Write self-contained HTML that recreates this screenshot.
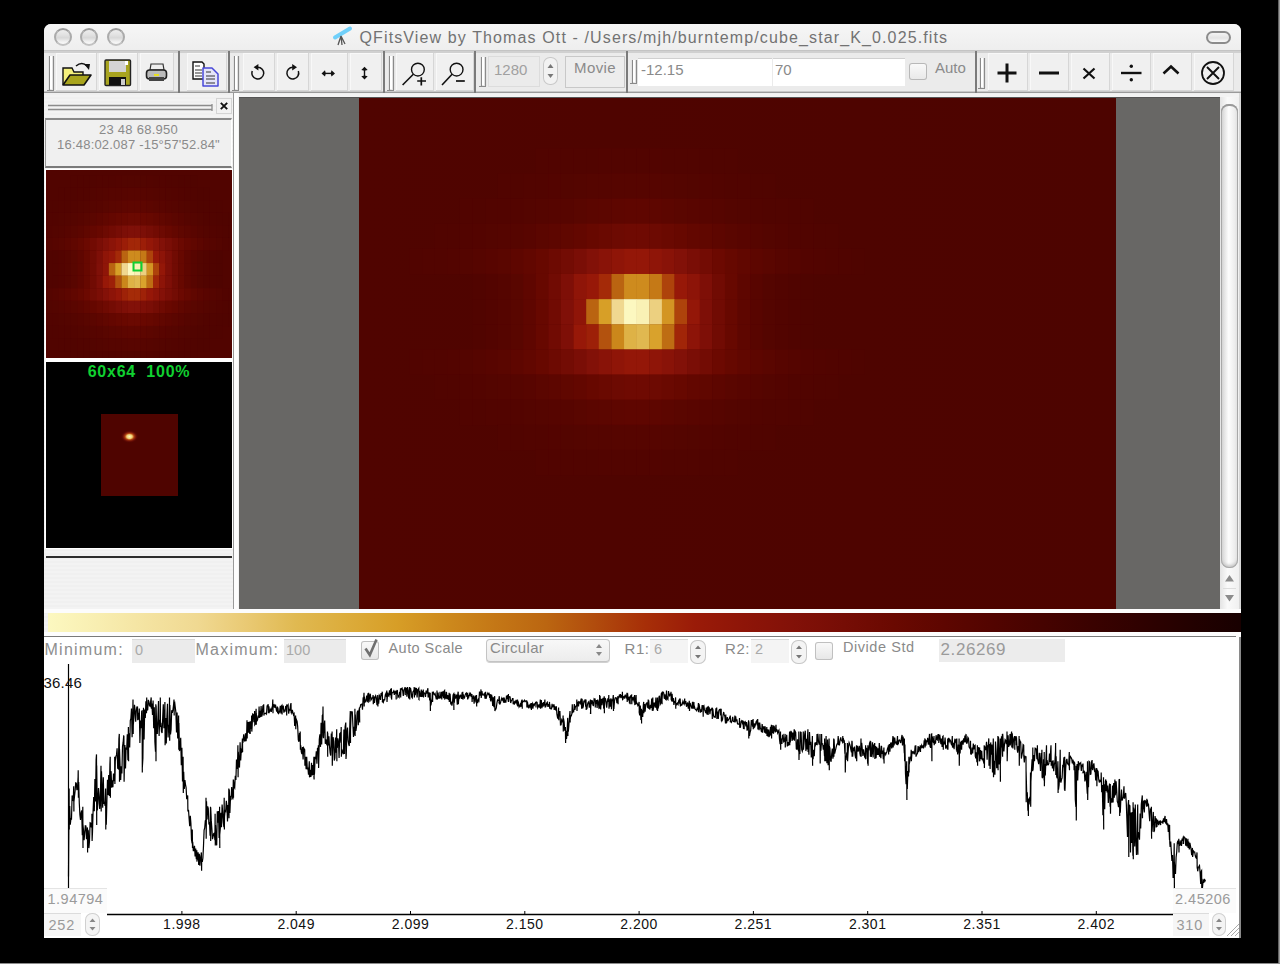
<!DOCTYPE html><html><head><meta charset="utf-8"><style>
*{margin:0;padding:0;box-sizing:border-box}
html,body{width:1280px;height:965px;background:#000;overflow:hidden;font-family:"Liberation Sans",sans-serif}
.a{position:absolute}
.t{white-space:nowrap;line-height:1}
svg{position:absolute;overflow:visible}
.btn{background:#f0f0f0;border-right:1px solid #d4d4d4;border-bottom:1px solid #d8d8d8;border-left:1px solid #f8f8f8}
.sep{background:#6a6a6a}
</style></head><body>
<svg width="0" height="0" style="position:absolute"><defs><g id="star"><rect x="176.68" y="50.28" width="12.92" height="25.44" fill="#510400"/><rect x="189.30" y="50.28" width="12.92" height="25.44" fill="#510400"/><rect x="201.92" y="50.28" width="12.92" height="25.44" fill="#510400"/><rect x="214.54" y="50.28" width="12.92" height="25.44" fill="#510400"/><rect x="227.16" y="50.28" width="12.92" height="25.44" fill="#510400"/><rect x="239.78" y="50.28" width="12.92" height="25.44" fill="#520400"/><rect x="252.40" y="50.28" width="12.92" height="25.44" fill="#520400"/><rect x="265.02" y="50.28" width="12.92" height="25.44" fill="#520400"/><rect x="277.64" y="50.28" width="12.92" height="25.44" fill="#520400"/><rect x="290.26" y="50.28" width="12.92" height="25.44" fill="#520400"/><rect x="302.88" y="50.28" width="12.92" height="25.44" fill="#510400"/><rect x="315.50" y="50.28" width="12.92" height="25.44" fill="#510400"/><rect x="328.12" y="50.28" width="12.92" height="25.44" fill="#510400"/><rect x="340.74" y="50.28" width="12.92" height="25.44" fill="#500400"/><rect x="353.36" y="50.28" width="12.92" height="25.44" fill="#500400"/><rect x="365.98" y="50.28" width="12.92" height="25.44" fill="#500400"/><rect x="138.82" y="75.42" width="12.92" height="25.44" fill="#510400"/><rect x="151.44" y="75.42" width="12.92" height="25.44" fill="#510400"/><rect x="164.06" y="75.42" width="12.92" height="25.44" fill="#520400"/><rect x="176.68" y="75.42" width="12.92" height="25.44" fill="#520400"/><rect x="189.30" y="75.42" width="12.92" height="25.44" fill="#530400"/><rect x="201.92" y="75.42" width="12.92" height="25.44" fill="#530500"/><rect x="214.54" y="75.42" width="12.92" height="25.44" fill="#540500"/><rect x="227.16" y="75.42" width="12.92" height="25.44" fill="#550500"/><rect x="239.78" y="75.42" width="12.92" height="25.44" fill="#550500"/><rect x="252.40" y="75.42" width="12.92" height="25.44" fill="#560500"/><rect x="265.02" y="75.42" width="12.92" height="25.44" fill="#560500"/><rect x="277.64" y="75.42" width="12.92" height="25.44" fill="#560500"/><rect x="290.26" y="75.42" width="12.92" height="25.44" fill="#560500"/><rect x="302.88" y="75.42" width="12.92" height="25.44" fill="#550500"/><rect x="315.50" y="75.42" width="12.92" height="25.44" fill="#540500"/><rect x="328.12" y="75.42" width="12.92" height="25.44" fill="#530500"/><rect x="340.74" y="75.42" width="12.92" height="25.44" fill="#530400"/><rect x="353.36" y="75.42" width="12.92" height="25.44" fill="#520400"/><rect x="365.98" y="75.42" width="12.92" height="25.44" fill="#510400"/><rect x="378.60" y="75.42" width="12.92" height="25.44" fill="#510400"/><rect x="391.22" y="75.42" width="12.92" height="25.44" fill="#500400"/><rect x="403.84" y="75.42" width="12.92" height="25.44" fill="#500400"/><rect x="100.96" y="100.56" width="12.92" height="25.44" fill="#510400"/><rect x="113.58" y="100.56" width="12.92" height="25.44" fill="#510400"/><rect x="126.20" y="100.56" width="12.92" height="25.44" fill="#520400"/><rect x="138.82" y="100.56" width="12.92" height="25.44" fill="#520400"/><rect x="151.44" y="100.56" width="12.92" height="25.44" fill="#530400"/><rect x="164.06" y="100.56" width="12.92" height="25.44" fill="#540500"/><rect x="176.68" y="100.56" width="12.92" height="25.44" fill="#550500"/><rect x="189.30" y="100.56" width="12.92" height="25.44" fill="#560500"/><rect x="201.92" y="100.56" width="12.92" height="25.44" fill="#570500"/><rect x="214.54" y="100.56" width="12.92" height="25.44" fill="#590600"/><rect x="227.16" y="100.56" width="12.92" height="25.44" fill="#5b0600"/><rect x="239.78" y="100.56" width="12.92" height="25.44" fill="#5c0600"/><rect x="252.40" y="100.56" width="12.92" height="25.44" fill="#5e0600"/><rect x="265.02" y="100.56" width="12.92" height="25.44" fill="#5f0600"/><rect x="277.64" y="100.56" width="12.92" height="25.44" fill="#5f0600"/><rect x="290.26" y="100.56" width="12.92" height="25.44" fill="#5e0600"/><rect x="302.88" y="100.56" width="12.92" height="25.44" fill="#5c0600"/><rect x="315.50" y="100.56" width="12.92" height="25.44" fill="#5a0600"/><rect x="328.12" y="100.56" width="12.92" height="25.44" fill="#590500"/><rect x="340.74" y="100.56" width="12.92" height="25.44" fill="#570500"/><rect x="353.36" y="100.56" width="12.92" height="25.44" fill="#560500"/><rect x="365.98" y="100.56" width="12.92" height="25.44" fill="#540500"/><rect x="378.60" y="100.56" width="12.92" height="25.44" fill="#530500"/><rect x="391.22" y="100.56" width="12.92" height="25.44" fill="#520400"/><rect x="403.84" y="100.56" width="12.92" height="25.44" fill="#510400"/><rect x="416.46" y="100.56" width="12.92" height="25.44" fill="#510400"/><rect x="429.08" y="100.56" width="12.92" height="25.44" fill="#500400"/><rect x="441.70" y="100.56" width="12.92" height="25.44" fill="#500400"/><rect x="75.72" y="125.70" width="12.92" height="25.44" fill="#510400"/><rect x="88.34" y="125.70" width="12.92" height="25.44" fill="#510400"/><rect x="100.96" y="125.70" width="12.92" height="25.44" fill="#520400"/><rect x="113.58" y="125.70" width="12.92" height="25.44" fill="#530400"/><rect x="126.20" y="125.70" width="12.92" height="25.44" fill="#540500"/><rect x="138.82" y="125.70" width="12.92" height="25.44" fill="#550500"/><rect x="151.44" y="125.70" width="12.92" height="25.44" fill="#560500"/><rect x="164.06" y="125.70" width="12.92" height="25.44" fill="#580500"/><rect x="176.68" y="125.70" width="12.92" height="25.44" fill="#5b0600"/><rect x="189.30" y="125.70" width="12.92" height="25.44" fill="#5d0600"/><rect x="201.92" y="125.70" width="12.92" height="25.44" fill="#600700"/><rect x="214.54" y="125.70" width="12.92" height="25.44" fill="#630700"/><rect x="227.16" y="125.70" width="12.92" height="25.44" fill="#670800"/><rect x="239.78" y="125.70" width="12.92" height="25.44" fill="#6a0901"/><rect x="252.40" y="125.70" width="12.92" height="25.44" fill="#6d0a02"/><rect x="265.02" y="125.70" width="12.92" height="25.44" fill="#6f0a02"/><rect x="277.64" y="125.70" width="12.92" height="25.44" fill="#6f0a02"/><rect x="290.26" y="125.70" width="12.92" height="25.44" fill="#6d0a02"/><rect x="302.88" y="125.70" width="12.92" height="25.44" fill="#6a0901"/><rect x="315.50" y="125.70" width="12.92" height="25.44" fill="#670800"/><rect x="328.12" y="125.70" width="12.92" height="25.44" fill="#630700"/><rect x="340.74" y="125.70" width="12.92" height="25.44" fill="#600700"/><rect x="353.36" y="125.70" width="12.92" height="25.44" fill="#5d0600"/><rect x="365.98" y="125.70" width="12.92" height="25.44" fill="#5a0600"/><rect x="378.60" y="125.70" width="12.92" height="25.44" fill="#580500"/><rect x="391.22" y="125.70" width="12.92" height="25.44" fill="#560500"/><rect x="403.84" y="125.70" width="12.92" height="25.44" fill="#540500"/><rect x="416.46" y="125.70" width="12.92" height="25.44" fill="#530400"/><rect x="429.08" y="125.70" width="12.92" height="25.44" fill="#510400"/><rect x="441.70" y="125.70" width="12.92" height="25.44" fill="#510400"/><rect x="454.32" y="125.70" width="12.92" height="25.44" fill="#500400"/><rect x="466.94" y="125.70" width="12.92" height="25.44" fill="#500400"/><rect x="50.48" y="150.84" width="12.92" height="25.44" fill="#510400"/><rect x="63.10" y="150.84" width="12.92" height="25.44" fill="#520400"/><rect x="75.72" y="150.84" width="12.92" height="25.44" fill="#520400"/><rect x="88.34" y="150.84" width="12.92" height="25.44" fill="#530400"/><rect x="100.96" y="150.84" width="12.92" height="25.44" fill="#540500"/><rect x="113.58" y="150.84" width="12.92" height="25.44" fill="#560500"/><rect x="126.20" y="150.84" width="12.92" height="25.44" fill="#580500"/><rect x="138.82" y="150.84" width="12.92" height="25.44" fill="#5a0600"/><rect x="151.44" y="150.84" width="12.92" height="25.44" fill="#5e0600"/><rect x="164.06" y="150.84" width="12.92" height="25.44" fill="#620700"/><rect x="176.68" y="150.84" width="12.92" height="25.44" fill="#670800"/><rect x="189.30" y="150.84" width="12.92" height="25.44" fill="#6d0a02"/><rect x="201.92" y="150.84" width="12.92" height="25.44" fill="#730c04"/><rect x="214.54" y="150.84" width="12.92" height="25.44" fill="#7a0e06"/><rect x="227.16" y="150.84" width="12.92" height="25.44" fill="#821108"/><rect x="239.78" y="150.84" width="12.92" height="25.44" fill="#891308"/><rect x="252.40" y="150.84" width="12.92" height="25.44" fill="#8f1508"/><rect x="265.02" y="150.84" width="12.92" height="25.44" fill="#941708"/><rect x="277.64" y="150.84" width="12.92" height="25.44" fill="#941708"/><rect x="290.26" y="150.84" width="12.92" height="25.44" fill="#8f1508"/><rect x="302.88" y="150.84" width="12.92" height="25.44" fill="#891308"/><rect x="315.50" y="150.84" width="12.92" height="25.44" fill="#821108"/><rect x="328.12" y="150.84" width="12.92" height="25.44" fill="#7a0e06"/><rect x="340.74" y="150.84" width="12.92" height="25.44" fill="#730c04"/><rect x="353.36" y="150.84" width="12.92" height="25.44" fill="#6c0901"/><rect x="365.98" y="150.84" width="12.92" height="25.44" fill="#660800"/><rect x="378.60" y="150.84" width="12.92" height="25.44" fill="#610700"/><rect x="391.22" y="150.84" width="12.92" height="25.44" fill="#5d0600"/><rect x="403.84" y="150.84" width="12.92" height="25.44" fill="#5a0600"/><rect x="416.46" y="150.84" width="12.92" height="25.44" fill="#570500"/><rect x="429.08" y="150.84" width="12.92" height="25.44" fill="#550500"/><rect x="441.70" y="150.84" width="12.92" height="25.44" fill="#530400"/><rect x="454.32" y="150.84" width="12.92" height="25.44" fill="#520400"/><rect x="466.94" y="150.84" width="12.92" height="25.44" fill="#510400"/><rect x="479.56" y="150.84" width="12.92" height="25.44" fill="#500400"/><rect x="492.18" y="150.84" width="12.92" height="25.44" fill="#4f0400"/><rect x="113.58" y="175.98" width="12.92" height="25.44" fill="#510400"/><rect x="126.20" y="175.98" width="12.92" height="25.44" fill="#530400"/><rect x="138.82" y="175.98" width="12.92" height="25.44" fill="#550500"/><rect x="151.44" y="175.98" width="12.92" height="25.44" fill="#590600"/><rect x="164.06" y="175.98" width="12.92" height="25.44" fill="#5f0600"/><rect x="176.68" y="175.98" width="12.92" height="25.44" fill="#670800"/><rect x="189.30" y="175.98" width="12.92" height="25.44" fill="#710b03"/><rect x="201.92" y="175.98" width="12.92" height="25.44" fill="#7e0f07"/><rect x="214.54" y="175.98" width="12.92" height="25.44" fill="#8f1508"/><rect x="227.16" y="175.98" width="12.92" height="25.44" fill="#971808"/><rect x="239.78" y="175.98" width="12.92" height="25.44" fill="#a42a08"/><rect x="252.40" y="175.98" width="12.92" height="25.44" fill="#ba6411"/><rect x="265.02" y="175.98" width="12.92" height="25.44" fill="#ce8b1e"/><rect x="277.64" y="175.98" width="12.92" height="25.44" fill="#ce8b1e"/><rect x="290.26" y="175.98" width="12.92" height="25.44" fill="#c57916"/><rect x="302.88" y="175.98" width="12.92" height="25.44" fill="#ae430b"/><rect x="315.50" y="175.98" width="12.92" height="25.44" fill="#971808"/><rect x="328.12" y="175.98" width="12.92" height="25.44" fill="#8d1408"/><rect x="340.74" y="175.98" width="12.92" height="25.44" fill="#7e0f07"/><rect x="353.36" y="175.98" width="12.92" height="25.44" fill="#710b03"/><rect x="365.98" y="175.98" width="12.92" height="25.44" fill="#670800"/><rect x="378.60" y="175.98" width="12.92" height="25.44" fill="#5e0600"/><rect x="391.22" y="175.98" width="12.92" height="25.44" fill="#580500"/><rect x="403.84" y="175.98" width="12.92" height="25.44" fill="#540500"/><rect x="416.46" y="175.98" width="12.92" height="25.44" fill="#520400"/><rect x="429.08" y="175.98" width="12.92" height="25.44" fill="#500400"/><rect x="441.70" y="175.98" width="12.92" height="25.44" fill="#4f0400"/><rect x="113.58" y="201.12" width="12.92" height="25.44" fill="#510400"/><rect x="126.20" y="201.12" width="12.92" height="25.44" fill="#530400"/><rect x="138.82" y="201.12" width="12.92" height="25.44" fill="#550500"/><rect x="151.44" y="201.12" width="12.92" height="25.44" fill="#590600"/><rect x="164.06" y="201.12" width="12.92" height="25.44" fill="#5f0600"/><rect x="176.68" y="201.12" width="12.92" height="25.44" fill="#670800"/><rect x="189.30" y="201.12" width="12.92" height="25.44" fill="#710b03"/><rect x="201.92" y="201.12" width="12.92" height="25.44" fill="#801008"/><rect x="214.54" y="201.12" width="12.92" height="25.44" fill="#8f1508"/><rect x="227.16" y="201.12" width="12.92" height="25.44" fill="#ba6411"/><rect x="239.78" y="201.12" width="12.92" height="25.44" fill="#d79f27"/><rect x="252.40" y="201.12" width="12.92" height="25.44" fill="#f0d890"/><rect x="265.02" y="201.12" width="12.92" height="25.44" fill="#fcf8c0"/><rect x="277.64" y="201.12" width="12.92" height="25.44" fill="#f9f1b5"/><rect x="290.26" y="201.12" width="12.92" height="25.44" fill="#ecd080"/><rect x="302.88" y="201.12" width="12.92" height="25.44" fill="#d39523"/><rect x="315.50" y="201.12" width="12.92" height="25.44" fill="#ae430b"/><rect x="328.12" y="201.12" width="12.92" height="25.44" fill="#941708"/><rect x="340.74" y="201.12" width="12.92" height="25.44" fill="#7e0f07"/><rect x="353.36" y="201.12" width="12.92" height="25.44" fill="#710b03"/><rect x="365.98" y="201.12" width="12.92" height="25.44" fill="#670800"/><rect x="378.60" y="201.12" width="12.92" height="25.44" fill="#5e0600"/><rect x="391.22" y="201.12" width="12.92" height="25.44" fill="#580500"/><rect x="403.84" y="201.12" width="12.92" height="25.44" fill="#540500"/><rect x="416.46" y="201.12" width="12.92" height="25.44" fill="#520400"/><rect x="429.08" y="201.12" width="12.92" height="25.44" fill="#500400"/><rect x="441.70" y="201.12" width="12.92" height="25.44" fill="#4f0400"/><rect x="113.58" y="226.26" width="12.92" height="25.44" fill="#510400"/><rect x="126.20" y="226.26" width="12.92" height="25.44" fill="#530400"/><rect x="138.82" y="226.26" width="12.92" height="25.44" fill="#550500"/><rect x="151.44" y="226.26" width="12.92" height="25.44" fill="#590600"/><rect x="164.06" y="226.26" width="12.92" height="25.44" fill="#5f0600"/><rect x="176.68" y="226.26" width="12.92" height="25.44" fill="#670800"/><rect x="189.30" y="226.26" width="12.92" height="25.44" fill="#710b03"/><rect x="201.92" y="226.26" width="12.92" height="25.44" fill="#7e0f07"/><rect x="214.54" y="226.26" width="12.92" height="25.44" fill="#971808"/><rect x="227.16" y="226.26" width="12.92" height="25.44" fill="#9d2008"/><rect x="239.78" y="226.26" width="12.92" height="25.44" fill="#b3520e"/><rect x="252.40" y="226.26" width="12.92" height="25.44" fill="#cb871b"/><rect x="265.02" y="226.26" width="12.92" height="25.44" fill="#deb246"/><rect x="277.64" y="226.26" width="12.92" height="25.44" fill="#e0b850"/><rect x="290.26" y="226.26" width="12.92" height="25.44" fill="#d9a22c"/><rect x="302.88" y="226.26" width="12.92" height="25.44" fill="#be6d13"/><rect x="315.50" y="226.26" width="12.92" height="25.44" fill="#a12508"/><rect x="328.12" y="226.26" width="12.92" height="25.44" fill="#8d1408"/><rect x="340.74" y="226.26" width="12.92" height="25.44" fill="#7e0f07"/><rect x="353.36" y="226.26" width="12.92" height="25.44" fill="#710b03"/><rect x="365.98" y="226.26" width="12.92" height="25.44" fill="#670800"/><rect x="378.60" y="226.26" width="12.92" height="25.44" fill="#5e0600"/><rect x="391.22" y="226.26" width="12.92" height="25.44" fill="#580500"/><rect x="403.84" y="226.26" width="12.92" height="25.44" fill="#540500"/><rect x="416.46" y="226.26" width="12.92" height="25.44" fill="#520400"/><rect x="429.08" y="226.26" width="12.92" height="25.44" fill="#500400"/><rect x="441.70" y="226.26" width="12.92" height="25.44" fill="#4f0400"/><rect x="50.48" y="251.40" width="12.92" height="25.44" fill="#510400"/><rect x="63.10" y="251.40" width="12.92" height="25.44" fill="#520400"/><rect x="75.72" y="251.40" width="12.92" height="25.44" fill="#520400"/><rect x="88.34" y="251.40" width="12.92" height="25.44" fill="#530400"/><rect x="100.96" y="251.40" width="12.92" height="25.44" fill="#540500"/><rect x="113.58" y="251.40" width="12.92" height="25.44" fill="#560500"/><rect x="126.20" y="251.40" width="12.92" height="25.44" fill="#580500"/><rect x="138.82" y="251.40" width="12.92" height="25.44" fill="#5a0600"/><rect x="151.44" y="251.40" width="12.92" height="25.44" fill="#5e0600"/><rect x="164.06" y="251.40" width="12.92" height="25.44" fill="#620700"/><rect x="176.68" y="251.40" width="12.92" height="25.44" fill="#670800"/><rect x="189.30" y="251.40" width="12.92" height="25.44" fill="#6d0a02"/><rect x="201.92" y="251.40" width="12.92" height="25.44" fill="#730c04"/><rect x="214.54" y="251.40" width="12.92" height="25.44" fill="#7a0e06"/><rect x="227.16" y="251.40" width="12.92" height="25.44" fill="#821108"/><rect x="239.78" y="251.40" width="12.92" height="25.44" fill="#891308"/><rect x="252.40" y="251.40" width="12.92" height="25.44" fill="#8f1508"/><rect x="265.02" y="251.40" width="12.92" height="25.44" fill="#941708"/><rect x="277.64" y="251.40" width="12.92" height="25.44" fill="#941708"/><rect x="290.26" y="251.40" width="12.92" height="25.44" fill="#8f1508"/><rect x="302.88" y="251.40" width="12.92" height="25.44" fill="#891308"/><rect x="315.50" y="251.40" width="12.92" height="25.44" fill="#821108"/><rect x="328.12" y="251.40" width="12.92" height="25.44" fill="#7a0e06"/><rect x="340.74" y="251.40" width="12.92" height="25.44" fill="#730c04"/><rect x="353.36" y="251.40" width="12.92" height="25.44" fill="#6c0901"/><rect x="365.98" y="251.40" width="12.92" height="25.44" fill="#660800"/><rect x="378.60" y="251.40" width="12.92" height="25.44" fill="#610700"/><rect x="391.22" y="251.40" width="12.92" height="25.44" fill="#5d0600"/><rect x="403.84" y="251.40" width="12.92" height="25.44" fill="#5a0600"/><rect x="416.46" y="251.40" width="12.92" height="25.44" fill="#570500"/><rect x="429.08" y="251.40" width="12.92" height="25.44" fill="#550500"/><rect x="441.70" y="251.40" width="12.92" height="25.44" fill="#530400"/><rect x="454.32" y="251.40" width="12.92" height="25.44" fill="#520400"/><rect x="466.94" y="251.40" width="12.92" height="25.44" fill="#510400"/><rect x="479.56" y="251.40" width="12.92" height="25.44" fill="#500400"/><rect x="492.18" y="251.40" width="12.92" height="25.44" fill="#4f0400"/><rect x="75.72" y="276.54" width="12.92" height="25.44" fill="#510400"/><rect x="88.34" y="276.54" width="12.92" height="25.44" fill="#510400"/><rect x="100.96" y="276.54" width="12.92" height="25.44" fill="#520400"/><rect x="113.58" y="276.54" width="12.92" height="25.44" fill="#530400"/><rect x="126.20" y="276.54" width="12.92" height="25.44" fill="#540500"/><rect x="138.82" y="276.54" width="12.92" height="25.44" fill="#550500"/><rect x="151.44" y="276.54" width="12.92" height="25.44" fill="#560500"/><rect x="164.06" y="276.54" width="12.92" height="25.44" fill="#580500"/><rect x="176.68" y="276.54" width="12.92" height="25.44" fill="#5b0600"/><rect x="189.30" y="276.54" width="12.92" height="25.44" fill="#5d0600"/><rect x="201.92" y="276.54" width="12.92" height="25.44" fill="#600700"/><rect x="214.54" y="276.54" width="12.92" height="25.44" fill="#630700"/><rect x="227.16" y="276.54" width="12.92" height="25.44" fill="#670800"/><rect x="239.78" y="276.54" width="12.92" height="25.44" fill="#6a0901"/><rect x="252.40" y="276.54" width="12.92" height="25.44" fill="#6d0a02"/><rect x="265.02" y="276.54" width="12.92" height="25.44" fill="#6f0a02"/><rect x="277.64" y="276.54" width="12.92" height="25.44" fill="#6f0a02"/><rect x="290.26" y="276.54" width="12.92" height="25.44" fill="#6d0a02"/><rect x="302.88" y="276.54" width="12.92" height="25.44" fill="#6a0901"/><rect x="315.50" y="276.54" width="12.92" height="25.44" fill="#670800"/><rect x="328.12" y="276.54" width="12.92" height="25.44" fill="#630700"/><rect x="340.74" y="276.54" width="12.92" height="25.44" fill="#600700"/><rect x="353.36" y="276.54" width="12.92" height="25.44" fill="#5d0600"/><rect x="365.98" y="276.54" width="12.92" height="25.44" fill="#5a0600"/><rect x="378.60" y="276.54" width="12.92" height="25.44" fill="#580500"/><rect x="391.22" y="276.54" width="12.92" height="25.44" fill="#560500"/><rect x="403.84" y="276.54" width="12.92" height="25.44" fill="#540500"/><rect x="416.46" y="276.54" width="12.92" height="25.44" fill="#530400"/><rect x="429.08" y="276.54" width="12.92" height="25.44" fill="#510400"/><rect x="441.70" y="276.54" width="12.92" height="25.44" fill="#510400"/><rect x="454.32" y="276.54" width="12.92" height="25.44" fill="#500400"/><rect x="466.94" y="276.54" width="12.92" height="25.44" fill="#500400"/><rect x="100.96" y="301.68" width="12.92" height="25.44" fill="#510400"/><rect x="113.58" y="301.68" width="12.92" height="25.44" fill="#510400"/><rect x="126.20" y="301.68" width="12.92" height="25.44" fill="#520400"/><rect x="138.82" y="301.68" width="12.92" height="25.44" fill="#520400"/><rect x="151.44" y="301.68" width="12.92" height="25.44" fill="#530400"/><rect x="164.06" y="301.68" width="12.92" height="25.44" fill="#540500"/><rect x="176.68" y="301.68" width="12.92" height="25.44" fill="#550500"/><rect x="189.30" y="301.68" width="12.92" height="25.44" fill="#560500"/><rect x="201.92" y="301.68" width="12.92" height="25.44" fill="#570500"/><rect x="214.54" y="301.68" width="12.92" height="25.44" fill="#590600"/><rect x="227.16" y="301.68" width="12.92" height="25.44" fill="#5b0600"/><rect x="239.78" y="301.68" width="12.92" height="25.44" fill="#5c0600"/><rect x="252.40" y="301.68" width="12.92" height="25.44" fill="#5e0600"/><rect x="265.02" y="301.68" width="12.92" height="25.44" fill="#5f0600"/><rect x="277.64" y="301.68" width="12.92" height="25.44" fill="#5f0600"/><rect x="290.26" y="301.68" width="12.92" height="25.44" fill="#5e0600"/><rect x="302.88" y="301.68" width="12.92" height="25.44" fill="#5c0600"/><rect x="315.50" y="301.68" width="12.92" height="25.44" fill="#5a0600"/><rect x="328.12" y="301.68" width="12.92" height="25.44" fill="#590500"/><rect x="340.74" y="301.68" width="12.92" height="25.44" fill="#570500"/><rect x="353.36" y="301.68" width="12.92" height="25.44" fill="#560500"/><rect x="365.98" y="301.68" width="12.92" height="25.44" fill="#540500"/><rect x="378.60" y="301.68" width="12.92" height="25.44" fill="#530500"/><rect x="391.22" y="301.68" width="12.92" height="25.44" fill="#520400"/><rect x="403.84" y="301.68" width="12.92" height="25.44" fill="#510400"/><rect x="416.46" y="301.68" width="12.92" height="25.44" fill="#510400"/><rect x="429.08" y="301.68" width="12.92" height="25.44" fill="#500400"/><rect x="441.70" y="301.68" width="12.92" height="25.44" fill="#500400"/><rect x="138.82" y="326.82" width="12.92" height="25.44" fill="#510400"/><rect x="151.44" y="326.82" width="12.92" height="25.44" fill="#510400"/><rect x="164.06" y="326.82" width="12.92" height="25.44" fill="#520400"/><rect x="176.68" y="326.82" width="12.92" height="25.44" fill="#520400"/><rect x="189.30" y="326.82" width="12.92" height="25.44" fill="#530400"/><rect x="201.92" y="326.82" width="12.92" height="25.44" fill="#530500"/><rect x="214.54" y="326.82" width="12.92" height="25.44" fill="#540500"/><rect x="227.16" y="326.82" width="12.92" height="25.44" fill="#550500"/><rect x="239.78" y="326.82" width="12.92" height="25.44" fill="#550500"/><rect x="252.40" y="326.82" width="12.92" height="25.44" fill="#560500"/><rect x="265.02" y="326.82" width="12.92" height="25.44" fill="#560500"/><rect x="277.64" y="326.82" width="12.92" height="25.44" fill="#560500"/><rect x="290.26" y="326.82" width="12.92" height="25.44" fill="#560500"/><rect x="302.88" y="326.82" width="12.92" height="25.44" fill="#550500"/><rect x="315.50" y="326.82" width="12.92" height="25.44" fill="#540500"/><rect x="328.12" y="326.82" width="12.92" height="25.44" fill="#530500"/><rect x="340.74" y="326.82" width="12.92" height="25.44" fill="#530400"/><rect x="353.36" y="326.82" width="12.92" height="25.44" fill="#520400"/><rect x="365.98" y="326.82" width="12.92" height="25.44" fill="#510400"/><rect x="378.60" y="326.82" width="12.92" height="25.44" fill="#510400"/><rect x="391.22" y="326.82" width="12.92" height="25.44" fill="#500400"/><rect x="403.84" y="326.82" width="12.92" height="25.44" fill="#500400"/><rect x="176.68" y="351.96" width="12.92" height="25.44" fill="#510400"/><rect x="189.30" y="351.96" width="12.92" height="25.44" fill="#510400"/><rect x="201.92" y="351.96" width="12.92" height="25.44" fill="#510400"/><rect x="214.54" y="351.96" width="12.92" height="25.44" fill="#510400"/><rect x="227.16" y="351.96" width="12.92" height="25.44" fill="#510400"/><rect x="239.78" y="351.96" width="12.92" height="25.44" fill="#520400"/><rect x="252.40" y="351.96" width="12.92" height="25.44" fill="#520400"/><rect x="265.02" y="351.96" width="12.92" height="25.44" fill="#520400"/><rect x="277.64" y="351.96" width="12.92" height="25.44" fill="#520400"/><rect x="290.26" y="351.96" width="12.92" height="25.44" fill="#520400"/><rect x="302.88" y="351.96" width="12.92" height="25.44" fill="#510400"/><rect x="315.50" y="351.96" width="12.92" height="25.44" fill="#510400"/><rect x="328.12" y="351.96" width="12.92" height="25.44" fill="#510400"/><rect x="340.74" y="351.96" width="12.92" height="25.44" fill="#500400"/><rect x="353.36" y="351.96" width="12.92" height="25.44" fill="#500400"/><rect x="365.98" y="351.96" width="12.92" height="25.44" fill="#500400"/></g><g id="star2"><rect x="151.44" y="25.14" width="12.92" height="25.44" fill="#510400"/><rect x="164.06" y="25.14" width="12.92" height="25.44" fill="#510400"/><rect x="176.68" y="25.14" width="12.92" height="25.44" fill="#510400"/><rect x="189.30" y="25.14" width="12.92" height="25.44" fill="#510400"/><rect x="201.92" y="25.14" width="12.92" height="25.44" fill="#520400"/><rect x="214.54" y="25.14" width="12.92" height="25.44" fill="#520400"/><rect x="227.16" y="25.14" width="12.92" height="25.44" fill="#520400"/><rect x="239.78" y="25.14" width="12.92" height="25.44" fill="#530400"/><rect x="252.40" y="25.14" width="12.92" height="25.44" fill="#530500"/><rect x="265.02" y="25.14" width="12.92" height="25.44" fill="#530500"/><rect x="277.64" y="25.14" width="12.92" height="25.44" fill="#530500"/><rect x="290.26" y="25.14" width="12.92" height="25.44" fill="#530500"/><rect x="302.88" y="25.14" width="12.92" height="25.44" fill="#530400"/><rect x="315.50" y="25.14" width="12.92" height="25.44" fill="#520400"/><rect x="328.12" y="25.14" width="12.92" height="25.44" fill="#520400"/><rect x="340.74" y="25.14" width="12.92" height="25.44" fill="#510400"/><rect x="353.36" y="25.14" width="12.92" height="25.44" fill="#510400"/><rect x="365.98" y="25.14" width="12.92" height="25.44" fill="#500400"/><rect x="378.60" y="25.14" width="12.92" height="25.44" fill="#500400"/><rect x="391.22" y="25.14" width="12.92" height="25.44" fill="#500400"/><rect x="126.20" y="50.28" width="12.92" height="25.44" fill="#510400"/><rect x="138.82" y="50.28" width="12.92" height="25.44" fill="#510400"/><rect x="151.44" y="50.28" width="12.92" height="25.44" fill="#510400"/><rect x="164.06" y="50.28" width="12.92" height="25.44" fill="#520400"/><rect x="176.68" y="50.28" width="12.92" height="25.44" fill="#520400"/><rect x="189.30" y="50.28" width="12.92" height="25.44" fill="#530500"/><rect x="201.92" y="50.28" width="12.92" height="25.44" fill="#540500"/><rect x="214.54" y="50.28" width="12.92" height="25.44" fill="#550500"/><rect x="227.16" y="50.28" width="12.92" height="25.44" fill="#560500"/><rect x="239.78" y="50.28" width="12.92" height="25.44" fill="#560500"/><rect x="252.40" y="50.28" width="12.92" height="25.44" fill="#570500"/><rect x="265.02" y="50.28" width="12.92" height="25.44" fill="#580500"/><rect x="277.64" y="50.28" width="12.92" height="25.44" fill="#580500"/><rect x="290.26" y="50.28" width="12.92" height="25.44" fill="#570500"/><rect x="302.88" y="50.28" width="12.92" height="25.44" fill="#560500"/><rect x="315.50" y="50.28" width="12.92" height="25.44" fill="#550500"/><rect x="328.12" y="50.28" width="12.92" height="25.44" fill="#540500"/><rect x="340.74" y="50.28" width="12.92" height="25.44" fill="#530500"/><rect x="353.36" y="50.28" width="12.92" height="25.44" fill="#530400"/><rect x="365.98" y="50.28" width="12.92" height="25.44" fill="#520400"/><rect x="378.60" y="50.28" width="12.92" height="25.44" fill="#510400"/><rect x="391.22" y="50.28" width="12.92" height="25.44" fill="#510400"/><rect x="403.84" y="50.28" width="12.92" height="25.44" fill="#500400"/><rect x="416.46" y="50.28" width="12.92" height="25.44" fill="#500400"/><rect x="100.96" y="75.42" width="12.92" height="25.44" fill="#510400"/><rect x="113.58" y="75.42" width="12.92" height="25.44" fill="#510400"/><rect x="126.20" y="75.42" width="12.92" height="25.44" fill="#520400"/><rect x="138.82" y="75.42" width="12.92" height="25.44" fill="#520400"/><rect x="151.44" y="75.42" width="12.92" height="25.44" fill="#530400"/><rect x="164.06" y="75.42" width="12.92" height="25.44" fill="#540500"/><rect x="176.68" y="75.42" width="12.92" height="25.44" fill="#550500"/><rect x="189.30" y="75.42" width="12.92" height="25.44" fill="#560500"/><rect x="201.92" y="75.42" width="12.92" height="25.44" fill="#570500"/><rect x="214.54" y="75.42" width="12.92" height="25.44" fill="#590600"/><rect x="227.16" y="75.42" width="12.92" height="25.44" fill="#5b0600"/><rect x="239.78" y="75.42" width="12.92" height="25.44" fill="#5c0600"/><rect x="252.40" y="75.42" width="12.92" height="25.44" fill="#5e0600"/><rect x="265.02" y="75.42" width="12.92" height="25.44" fill="#5f0600"/><rect x="277.64" y="75.42" width="12.92" height="25.44" fill="#5f0600"/><rect x="290.26" y="75.42" width="12.92" height="25.44" fill="#5e0600"/><rect x="302.88" y="75.42" width="12.92" height="25.44" fill="#5c0600"/><rect x="315.50" y="75.42" width="12.92" height="25.44" fill="#5a0600"/><rect x="328.12" y="75.42" width="12.92" height="25.44" fill="#590500"/><rect x="340.74" y="75.42" width="12.92" height="25.44" fill="#570500"/><rect x="353.36" y="75.42" width="12.92" height="25.44" fill="#560500"/><rect x="365.98" y="75.42" width="12.92" height="25.44" fill="#540500"/><rect x="378.60" y="75.42" width="12.92" height="25.44" fill="#530500"/><rect x="391.22" y="75.42" width="12.92" height="25.44" fill="#520400"/><rect x="403.84" y="75.42" width="12.92" height="25.44" fill="#510400"/><rect x="416.46" y="75.42" width="12.92" height="25.44" fill="#510400"/><rect x="429.08" y="75.42" width="12.92" height="25.44" fill="#500400"/><rect x="441.70" y="75.42" width="12.92" height="25.44" fill="#500400"/><rect x="75.72" y="100.56" width="12.92" height="25.44" fill="#510400"/><rect x="88.34" y="100.56" width="12.92" height="25.44" fill="#510400"/><rect x="100.96" y="100.56" width="12.92" height="25.44" fill="#520400"/><rect x="113.58" y="100.56" width="12.92" height="25.44" fill="#520400"/><rect x="126.20" y="100.56" width="12.92" height="25.44" fill="#530500"/><rect x="138.82" y="100.56" width="12.92" height="25.44" fill="#540500"/><rect x="151.44" y="100.56" width="12.92" height="25.44" fill="#550500"/><rect x="164.06" y="100.56" width="12.92" height="25.44" fill="#570500"/><rect x="176.68" y="100.56" width="12.92" height="25.44" fill="#590600"/><rect x="189.30" y="100.56" width="12.92" height="25.44" fill="#5b0600"/><rect x="201.92" y="100.56" width="12.92" height="25.44" fill="#5e0600"/><rect x="214.54" y="100.56" width="12.92" height="25.44" fill="#610700"/><rect x="227.16" y="100.56" width="12.92" height="25.44" fill="#640700"/><rect x="239.78" y="100.56" width="12.92" height="25.44" fill="#670800"/><rect x="252.40" y="100.56" width="12.92" height="25.44" fill="#690800"/><rect x="265.02" y="100.56" width="12.92" height="25.44" fill="#6b0901"/><rect x="277.64" y="100.56" width="12.92" height="25.44" fill="#6b0901"/><rect x="290.26" y="100.56" width="12.92" height="25.44" fill="#690800"/><rect x="302.88" y="100.56" width="12.92" height="25.44" fill="#670800"/><rect x="315.50" y="100.56" width="12.92" height="25.44" fill="#640700"/><rect x="328.12" y="100.56" width="12.92" height="25.44" fill="#610700"/><rect x="340.74" y="100.56" width="12.92" height="25.44" fill="#5e0600"/><rect x="353.36" y="100.56" width="12.92" height="25.44" fill="#5b0600"/><rect x="365.98" y="100.56" width="12.92" height="25.44" fill="#590500"/><rect x="378.60" y="100.56" width="12.92" height="25.44" fill="#560500"/><rect x="391.22" y="100.56" width="12.92" height="25.44" fill="#550500"/><rect x="403.84" y="100.56" width="12.92" height="25.44" fill="#530500"/><rect x="416.46" y="100.56" width="12.92" height="25.44" fill="#520400"/><rect x="429.08" y="100.56" width="12.92" height="25.44" fill="#510400"/><rect x="441.70" y="100.56" width="12.92" height="25.44" fill="#500400"/><rect x="454.32" y="100.56" width="12.92" height="25.44" fill="#500400"/><rect x="466.94" y="100.56" width="12.92" height="25.44" fill="#4f0400"/><rect x="63.10" y="125.70" width="12.92" height="25.44" fill="#510400"/><rect x="75.72" y="125.70" width="12.92" height="25.44" fill="#510400"/><rect x="88.34" y="125.70" width="12.92" height="25.44" fill="#520400"/><rect x="100.96" y="125.70" width="12.92" height="25.44" fill="#530400"/><rect x="113.58" y="125.70" width="12.92" height="25.44" fill="#540500"/><rect x="126.20" y="125.70" width="12.92" height="25.44" fill="#550500"/><rect x="138.82" y="125.70" width="12.92" height="25.44" fill="#570500"/><rect x="151.44" y="125.70" width="12.92" height="25.44" fill="#590600"/><rect x="164.06" y="125.70" width="12.92" height="25.44" fill="#5c0600"/><rect x="176.68" y="125.70" width="12.92" height="25.44" fill="#600700"/><rect x="189.30" y="125.70" width="12.92" height="25.44" fill="#640700"/><rect x="201.92" y="125.70" width="12.92" height="25.44" fill="#680800"/><rect x="214.54" y="125.70" width="12.92" height="25.44" fill="#6d0a02"/><rect x="227.16" y="125.70" width="12.92" height="25.44" fill="#720b03"/><rect x="239.78" y="125.70" width="12.92" height="25.44" fill="#770d05"/><rect x="252.40" y="125.70" width="12.92" height="25.44" fill="#7c0f07"/><rect x="265.02" y="125.70" width="12.92" height="25.44" fill="#7f1008"/><rect x="277.64" y="125.70" width="12.92" height="25.44" fill="#7f1008"/><rect x="290.26" y="125.70" width="12.92" height="25.44" fill="#7c0f07"/><rect x="302.88" y="125.70" width="12.92" height="25.44" fill="#770d05"/><rect x="315.50" y="125.70" width="12.92" height="25.44" fill="#720b03"/><rect x="328.12" y="125.70" width="12.92" height="25.44" fill="#6d0a02"/><rect x="340.74" y="125.70" width="12.92" height="25.44" fill="#680800"/><rect x="353.36" y="125.70" width="12.92" height="25.44" fill="#630700"/><rect x="365.98" y="125.70" width="12.92" height="25.44" fill="#5f0700"/><rect x="378.60" y="125.70" width="12.92" height="25.44" fill="#5c0600"/><rect x="391.22" y="125.70" width="12.92" height="25.44" fill="#590500"/><rect x="403.84" y="125.70" width="12.92" height="25.44" fill="#560500"/><rect x="416.46" y="125.70" width="12.92" height="25.44" fill="#540500"/><rect x="429.08" y="125.70" width="12.92" height="25.44" fill="#530400"/><rect x="441.70" y="125.70" width="12.92" height="25.44" fill="#520400"/><rect x="454.32" y="125.70" width="12.92" height="25.44" fill="#510400"/><rect x="466.94" y="125.70" width="12.92" height="25.44" fill="#500400"/><rect x="479.56" y="125.70" width="12.92" height="25.44" fill="#500400"/><rect x="50.48" y="150.84" width="12.92" height="25.44" fill="#510400"/><rect x="63.10" y="150.84" width="12.92" height="25.44" fill="#520400"/><rect x="75.72" y="150.84" width="12.92" height="25.44" fill="#530400"/><rect x="88.34" y="150.84" width="12.92" height="25.44" fill="#540500"/><rect x="100.96" y="150.84" width="12.92" height="25.44" fill="#550500"/><rect x="113.58" y="150.84" width="12.92" height="25.44" fill="#570500"/><rect x="126.20" y="150.84" width="12.92" height="25.44" fill="#590600"/><rect x="138.82" y="150.84" width="12.92" height="25.44" fill="#5c0600"/><rect x="151.44" y="150.84" width="12.92" height="25.44" fill="#600700"/><rect x="164.06" y="150.84" width="12.92" height="25.44" fill="#650800"/><rect x="176.68" y="150.84" width="12.92" height="25.44" fill="#6b0901"/><rect x="189.30" y="150.84" width="12.92" height="25.44" fill="#720b03"/><rect x="201.92" y="150.84" width="12.92" height="25.44" fill="#7a0e06"/><rect x="214.54" y="150.84" width="12.92" height="25.44" fill="#821108"/><rect x="227.16" y="150.84" width="12.92" height="25.44" fill="#8b1408"/><rect x="239.78" y="150.84" width="12.92" height="25.44" fill="#941708"/><rect x="252.40" y="150.84" width="12.92" height="25.44" fill="#9b1d08"/><rect x="265.02" y="150.84" width="12.92" height="25.44" fill="#a22608"/><rect x="277.64" y="150.84" width="12.92" height="25.44" fill="#a22708"/><rect x="290.26" y="150.84" width="12.92" height="25.44" fill="#9c1e08"/><rect x="302.88" y="150.84" width="12.92" height="25.44" fill="#941708"/><rect x="315.50" y="150.84" width="12.92" height="25.44" fill="#8b1408"/><rect x="328.12" y="150.84" width="12.92" height="25.44" fill="#821108"/><rect x="340.74" y="150.84" width="12.92" height="25.44" fill="#7a0e06"/><rect x="353.36" y="150.84" width="12.92" height="25.44" fill="#720b03"/><rect x="365.98" y="150.84" width="12.92" height="25.44" fill="#6b0901"/><rect x="378.60" y="150.84" width="12.92" height="25.44" fill="#650700"/><rect x="391.22" y="150.84" width="12.92" height="25.44" fill="#600700"/><rect x="403.84" y="150.84" width="12.92" height="25.44" fill="#5c0600"/><rect x="416.46" y="150.84" width="12.92" height="25.44" fill="#580500"/><rect x="429.08" y="150.84" width="12.92" height="25.44" fill="#560500"/><rect x="441.70" y="150.84" width="12.92" height="25.44" fill="#540500"/><rect x="454.32" y="150.84" width="12.92" height="25.44" fill="#520400"/><rect x="466.94" y="150.84" width="12.92" height="25.44" fill="#510400"/><rect x="479.56" y="150.84" width="12.92" height="25.44" fill="#500400"/><rect x="492.18" y="150.84" width="12.92" height="25.44" fill="#500400"/><rect x="113.58" y="175.98" width="12.92" height="25.44" fill="#510400"/><rect x="126.20" y="175.98" width="12.92" height="25.44" fill="#530400"/><rect x="138.82" y="175.98" width="12.92" height="25.44" fill="#550500"/><rect x="151.44" y="175.98" width="12.92" height="25.44" fill="#590600"/><rect x="164.06" y="175.98" width="12.92" height="25.44" fill="#5f0600"/><rect x="176.68" y="175.98" width="12.92" height="25.44" fill="#670800"/><rect x="189.30" y="175.98" width="12.92" height="25.44" fill="#710b03"/><rect x="201.92" y="175.98" width="12.92" height="25.44" fill="#7e0f07"/><rect x="214.54" y="175.98" width="12.92" height="25.44" fill="#8f1508"/><rect x="227.16" y="175.98" width="12.92" height="25.44" fill="#971808"/><rect x="239.78" y="175.98" width="12.92" height="25.44" fill="#a42a08"/><rect x="252.40" y="175.98" width="12.92" height="25.44" fill="#ba6411"/><rect x="265.02" y="175.98" width="12.92" height="25.44" fill="#ce8b1e"/><rect x="277.64" y="175.98" width="12.92" height="25.44" fill="#ce8b1e"/><rect x="290.26" y="175.98" width="12.92" height="25.44" fill="#c57916"/><rect x="302.88" y="175.98" width="12.92" height="25.44" fill="#ae430b"/><rect x="315.50" y="175.98" width="12.92" height="25.44" fill="#971808"/><rect x="328.12" y="175.98" width="12.92" height="25.44" fill="#8d1408"/><rect x="340.74" y="175.98" width="12.92" height="25.44" fill="#7e0f07"/><rect x="353.36" y="175.98" width="12.92" height="25.44" fill="#710b03"/><rect x="365.98" y="175.98" width="12.92" height="25.44" fill="#670800"/><rect x="378.60" y="175.98" width="12.92" height="25.44" fill="#5e0600"/><rect x="391.22" y="175.98" width="12.92" height="25.44" fill="#580500"/><rect x="403.84" y="175.98" width="12.92" height="25.44" fill="#540500"/><rect x="416.46" y="175.98" width="12.92" height="25.44" fill="#520400"/><rect x="429.08" y="175.98" width="12.92" height="25.44" fill="#500400"/><rect x="441.70" y="175.98" width="12.92" height="25.44" fill="#4f0400"/><rect x="113.58" y="201.12" width="12.92" height="25.44" fill="#510400"/><rect x="126.20" y="201.12" width="12.92" height="25.44" fill="#530400"/><rect x="138.82" y="201.12" width="12.92" height="25.44" fill="#550500"/><rect x="151.44" y="201.12" width="12.92" height="25.44" fill="#590600"/><rect x="164.06" y="201.12" width="12.92" height="25.44" fill="#5f0600"/><rect x="176.68" y="201.12" width="12.92" height="25.44" fill="#670800"/><rect x="189.30" y="201.12" width="12.92" height="25.44" fill="#710b03"/><rect x="201.92" y="201.12" width="12.92" height="25.44" fill="#801008"/><rect x="214.54" y="201.12" width="12.92" height="25.44" fill="#8f1508"/><rect x="227.16" y="201.12" width="12.92" height="25.44" fill="#ba6411"/><rect x="239.78" y="201.12" width="12.92" height="25.44" fill="#d79f27"/><rect x="252.40" y="201.12" width="12.92" height="25.44" fill="#f0d890"/><rect x="265.02" y="201.12" width="12.92" height="25.44" fill="#fcf8c0"/><rect x="277.64" y="201.12" width="12.92" height="25.44" fill="#f9f1b5"/><rect x="290.26" y="201.12" width="12.92" height="25.44" fill="#ecd080"/><rect x="302.88" y="201.12" width="12.92" height="25.44" fill="#d39523"/><rect x="315.50" y="201.12" width="12.92" height="25.44" fill="#ae430b"/><rect x="328.12" y="201.12" width="12.92" height="25.44" fill="#941708"/><rect x="340.74" y="201.12" width="12.92" height="25.44" fill="#7e0f07"/><rect x="353.36" y="201.12" width="12.92" height="25.44" fill="#710b03"/><rect x="365.98" y="201.12" width="12.92" height="25.44" fill="#670800"/><rect x="378.60" y="201.12" width="12.92" height="25.44" fill="#5e0600"/><rect x="391.22" y="201.12" width="12.92" height="25.44" fill="#580500"/><rect x="403.84" y="201.12" width="12.92" height="25.44" fill="#540500"/><rect x="416.46" y="201.12" width="12.92" height="25.44" fill="#520400"/><rect x="429.08" y="201.12" width="12.92" height="25.44" fill="#500400"/><rect x="441.70" y="201.12" width="12.92" height="25.44" fill="#4f0400"/><rect x="113.58" y="226.26" width="12.92" height="25.44" fill="#510400"/><rect x="126.20" y="226.26" width="12.92" height="25.44" fill="#530400"/><rect x="138.82" y="226.26" width="12.92" height="25.44" fill="#550500"/><rect x="151.44" y="226.26" width="12.92" height="25.44" fill="#590600"/><rect x="164.06" y="226.26" width="12.92" height="25.44" fill="#5f0600"/><rect x="176.68" y="226.26" width="12.92" height="25.44" fill="#670800"/><rect x="189.30" y="226.26" width="12.92" height="25.44" fill="#710b03"/><rect x="201.92" y="226.26" width="12.92" height="25.44" fill="#7e0f07"/><rect x="214.54" y="226.26" width="12.92" height="25.44" fill="#971808"/><rect x="227.16" y="226.26" width="12.92" height="25.44" fill="#9d2008"/><rect x="239.78" y="226.26" width="12.92" height="25.44" fill="#b3520e"/><rect x="252.40" y="226.26" width="12.92" height="25.44" fill="#cb871b"/><rect x="265.02" y="226.26" width="12.92" height="25.44" fill="#deb246"/><rect x="277.64" y="226.26" width="12.92" height="25.44" fill="#e0b850"/><rect x="290.26" y="226.26" width="12.92" height="25.44" fill="#d9a22c"/><rect x="302.88" y="226.26" width="12.92" height="25.44" fill="#be6d13"/><rect x="315.50" y="226.26" width="12.92" height="25.44" fill="#a12508"/><rect x="328.12" y="226.26" width="12.92" height="25.44" fill="#8d1408"/><rect x="340.74" y="226.26" width="12.92" height="25.44" fill="#7e0f07"/><rect x="353.36" y="226.26" width="12.92" height="25.44" fill="#710b03"/><rect x="365.98" y="226.26" width="12.92" height="25.44" fill="#670800"/><rect x="378.60" y="226.26" width="12.92" height="25.44" fill="#5e0600"/><rect x="391.22" y="226.26" width="12.92" height="25.44" fill="#580500"/><rect x="403.84" y="226.26" width="12.92" height="25.44" fill="#540500"/><rect x="416.46" y="226.26" width="12.92" height="25.44" fill="#520400"/><rect x="429.08" y="226.26" width="12.92" height="25.44" fill="#500400"/><rect x="441.70" y="226.26" width="12.92" height="25.44" fill="#4f0400"/><rect x="50.48" y="251.40" width="12.92" height="25.44" fill="#510400"/><rect x="63.10" y="251.40" width="12.92" height="25.44" fill="#520400"/><rect x="75.72" y="251.40" width="12.92" height="25.44" fill="#530400"/><rect x="88.34" y="251.40" width="12.92" height="25.44" fill="#540500"/><rect x="100.96" y="251.40" width="12.92" height="25.44" fill="#550500"/><rect x="113.58" y="251.40" width="12.92" height="25.44" fill="#570500"/><rect x="126.20" y="251.40" width="12.92" height="25.44" fill="#5a0600"/><rect x="138.82" y="251.40" width="12.92" height="25.44" fill="#5d0600"/><rect x="151.44" y="251.40" width="12.92" height="25.44" fill="#610700"/><rect x="164.06" y="251.40" width="12.92" height="25.44" fill="#660800"/><rect x="176.68" y="251.40" width="12.92" height="25.44" fill="#6c0901"/><rect x="189.30" y="251.40" width="12.92" height="25.44" fill="#730c04"/><rect x="201.92" y="251.40" width="12.92" height="25.44" fill="#7b0e06"/><rect x="214.54" y="251.40" width="12.92" height="25.44" fill="#841108"/><rect x="227.16" y="251.40" width="12.92" height="25.44" fill="#8d1408"/><rect x="239.78" y="251.40" width="12.92" height="25.44" fill="#961708"/><rect x="252.40" y="251.40" width="12.92" height="25.44" fill="#9e2208"/><rect x="265.02" y="251.40" width="12.92" height="25.44" fill="#a52b08"/><rect x="277.64" y="251.40" width="12.92" height="25.44" fill="#a52b08"/><rect x="290.26" y="251.40" width="12.92" height="25.44" fill="#9f2208"/><rect x="302.88" y="251.40" width="12.92" height="25.44" fill="#961708"/><rect x="315.50" y="251.40" width="12.92" height="25.44" fill="#8d1408"/><rect x="328.12" y="251.40" width="12.92" height="25.44" fill="#841108"/><rect x="340.74" y="251.40" width="12.92" height="25.44" fill="#7b0e06"/><rect x="353.36" y="251.40" width="12.92" height="25.44" fill="#730c04"/><rect x="365.98" y="251.40" width="12.92" height="25.44" fill="#6c0901"/><rect x="378.60" y="251.40" width="12.92" height="25.44" fill="#660800"/><rect x="391.22" y="251.40" width="12.92" height="25.44" fill="#600700"/><rect x="403.84" y="251.40" width="12.92" height="25.44" fill="#5c0600"/><rect x="416.46" y="251.40" width="12.92" height="25.44" fill="#590500"/><rect x="429.08" y="251.40" width="12.92" height="25.44" fill="#560500"/><rect x="441.70" y="251.40" width="12.92" height="25.44" fill="#540500"/><rect x="454.32" y="251.40" width="12.92" height="25.44" fill="#520400"/><rect x="466.94" y="251.40" width="12.92" height="25.44" fill="#510400"/><rect x="479.56" y="251.40" width="12.92" height="25.44" fill="#500400"/><rect x="492.18" y="251.40" width="12.92" height="25.44" fill="#500400"/><rect x="504.80" y="251.40" width="12.92" height="25.44" fill="#4f0400"/><rect x="63.10" y="276.54" width="12.92" height="25.44" fill="#510400"/><rect x="75.72" y="276.54" width="12.92" height="25.44" fill="#520400"/><rect x="88.34" y="276.54" width="12.92" height="25.44" fill="#520400"/><rect x="100.96" y="276.54" width="12.92" height="25.44" fill="#530500"/><rect x="113.58" y="276.54" width="12.92" height="25.44" fill="#540500"/><rect x="126.20" y="276.54" width="12.92" height="25.44" fill="#560500"/><rect x="138.82" y="276.54" width="12.92" height="25.44" fill="#580500"/><rect x="151.44" y="276.54" width="12.92" height="25.44" fill="#5a0600"/><rect x="164.06" y="276.54" width="12.92" height="25.44" fill="#5d0600"/><rect x="176.68" y="276.54" width="12.92" height="25.44" fill="#610700"/><rect x="189.30" y="276.54" width="12.92" height="25.44" fill="#650700"/><rect x="201.92" y="276.54" width="12.92" height="25.44" fill="#6a0901"/><rect x="214.54" y="276.54" width="12.92" height="25.44" fill="#6f0a02"/><rect x="227.16" y="276.54" width="12.92" height="25.44" fill="#740c04"/><rect x="239.78" y="276.54" width="12.92" height="25.44" fill="#7a0e06"/><rect x="252.40" y="276.54" width="12.92" height="25.44" fill="#7e0f07"/><rect x="265.02" y="276.54" width="12.92" height="25.44" fill="#821108"/><rect x="277.64" y="276.54" width="12.92" height="25.44" fill="#821108"/><rect x="290.26" y="276.54" width="12.92" height="25.44" fill="#7e0f07"/><rect x="302.88" y="276.54" width="12.92" height="25.44" fill="#7a0e06"/><rect x="315.50" y="276.54" width="12.92" height="25.44" fill="#740c04"/><rect x="328.12" y="276.54" width="12.92" height="25.44" fill="#6f0a02"/><rect x="340.74" y="276.54" width="12.92" height="25.44" fill="#690800"/><rect x="353.36" y="276.54" width="12.92" height="25.44" fill="#650700"/><rect x="365.98" y="276.54" width="12.92" height="25.44" fill="#600700"/><rect x="378.60" y="276.54" width="12.92" height="25.44" fill="#5c0600"/><rect x="391.22" y="276.54" width="12.92" height="25.44" fill="#590600"/><rect x="403.84" y="276.54" width="12.92" height="25.44" fill="#570500"/><rect x="416.46" y="276.54" width="12.92" height="25.44" fill="#550500"/><rect x="429.08" y="276.54" width="12.92" height="25.44" fill="#530500"/><rect x="441.70" y="276.54" width="12.92" height="25.44" fill="#520400"/><rect x="454.32" y="276.54" width="12.92" height="25.44" fill="#510400"/><rect x="466.94" y="276.54" width="12.92" height="25.44" fill="#500400"/><rect x="479.56" y="276.54" width="12.92" height="25.44" fill="#500400"/><rect x="75.72" y="301.68" width="12.92" height="25.44" fill="#510400"/><rect x="88.34" y="301.68" width="12.92" height="25.44" fill="#510400"/><rect x="100.96" y="301.68" width="12.92" height="25.44" fill="#520400"/><rect x="113.58" y="301.68" width="12.92" height="25.44" fill="#520400"/><rect x="126.20" y="301.68" width="12.92" height="25.44" fill="#530500"/><rect x="138.82" y="301.68" width="12.92" height="25.44" fill="#540500"/><rect x="151.44" y="301.68" width="12.92" height="25.44" fill="#550500"/><rect x="164.06" y="301.68" width="12.92" height="25.44" fill="#570500"/><rect x="176.68" y="301.68" width="12.92" height="25.44" fill="#590600"/><rect x="189.30" y="301.68" width="12.92" height="25.44" fill="#5b0600"/><rect x="201.92" y="301.68" width="12.92" height="25.44" fill="#5e0600"/><rect x="214.54" y="301.68" width="12.92" height="25.44" fill="#610700"/><rect x="227.16" y="301.68" width="12.92" height="25.44" fill="#640700"/><rect x="239.78" y="301.68" width="12.92" height="25.44" fill="#670800"/><rect x="252.40" y="301.68" width="12.92" height="25.44" fill="#690800"/><rect x="265.02" y="301.68" width="12.92" height="25.44" fill="#6b0901"/><rect x="277.64" y="301.68" width="12.92" height="25.44" fill="#6b0901"/><rect x="290.26" y="301.68" width="12.92" height="25.44" fill="#690800"/><rect x="302.88" y="301.68" width="12.92" height="25.44" fill="#670800"/><rect x="315.50" y="301.68" width="12.92" height="25.44" fill="#640700"/><rect x="328.12" y="301.68" width="12.92" height="25.44" fill="#610700"/><rect x="340.74" y="301.68" width="12.92" height="25.44" fill="#5e0600"/><rect x="353.36" y="301.68" width="12.92" height="25.44" fill="#5b0600"/><rect x="365.98" y="301.68" width="12.92" height="25.44" fill="#590500"/><rect x="378.60" y="301.68" width="12.92" height="25.44" fill="#560500"/><rect x="391.22" y="301.68" width="12.92" height="25.44" fill="#550500"/><rect x="403.84" y="301.68" width="12.92" height="25.44" fill="#530500"/><rect x="416.46" y="301.68" width="12.92" height="25.44" fill="#520400"/><rect x="429.08" y="301.68" width="12.92" height="25.44" fill="#510400"/><rect x="441.70" y="301.68" width="12.92" height="25.44" fill="#500400"/><rect x="454.32" y="301.68" width="12.92" height="25.44" fill="#500400"/><rect x="466.94" y="301.68" width="12.92" height="25.44" fill="#4f0400"/><rect x="100.96" y="326.82" width="12.92" height="25.44" fill="#510400"/><rect x="113.58" y="326.82" width="12.92" height="25.44" fill="#510400"/><rect x="126.20" y="326.82" width="12.92" height="25.44" fill="#520400"/><rect x="138.82" y="326.82" width="12.92" height="25.44" fill="#520400"/><rect x="151.44" y="326.82" width="12.92" height="25.44" fill="#530400"/><rect x="164.06" y="326.82" width="12.92" height="25.44" fill="#540500"/><rect x="176.68" y="326.82" width="12.92" height="25.44" fill="#550500"/><rect x="189.30" y="326.82" width="12.92" height="25.44" fill="#560500"/><rect x="201.92" y="326.82" width="12.92" height="25.44" fill="#570500"/><rect x="214.54" y="326.82" width="12.92" height="25.44" fill="#590600"/><rect x="227.16" y="326.82" width="12.92" height="25.44" fill="#5b0600"/><rect x="239.78" y="326.82" width="12.92" height="25.44" fill="#5c0600"/><rect x="252.40" y="326.82" width="12.92" height="25.44" fill="#5e0600"/><rect x="265.02" y="326.82" width="12.92" height="25.44" fill="#5f0600"/><rect x="277.64" y="326.82" width="12.92" height="25.44" fill="#5f0600"/><rect x="290.26" y="326.82" width="12.92" height="25.44" fill="#5e0600"/><rect x="302.88" y="326.82" width="12.92" height="25.44" fill="#5c0600"/><rect x="315.50" y="326.82" width="12.92" height="25.44" fill="#5a0600"/><rect x="328.12" y="326.82" width="12.92" height="25.44" fill="#590500"/><rect x="340.74" y="326.82" width="12.92" height="25.44" fill="#570500"/><rect x="353.36" y="326.82" width="12.92" height="25.44" fill="#560500"/><rect x="365.98" y="326.82" width="12.92" height="25.44" fill="#540500"/><rect x="378.60" y="326.82" width="12.92" height="25.44" fill="#530500"/><rect x="391.22" y="326.82" width="12.92" height="25.44" fill="#520400"/><rect x="403.84" y="326.82" width="12.92" height="25.44" fill="#510400"/><rect x="416.46" y="326.82" width="12.92" height="25.44" fill="#510400"/><rect x="429.08" y="326.82" width="12.92" height="25.44" fill="#500400"/><rect x="441.70" y="326.82" width="12.92" height="25.44" fill="#500400"/><rect x="126.20" y="351.96" width="12.92" height="25.44" fill="#510400"/><rect x="138.82" y="351.96" width="12.92" height="25.44" fill="#510400"/><rect x="151.44" y="351.96" width="12.92" height="25.44" fill="#510400"/><rect x="164.06" y="351.96" width="12.92" height="25.44" fill="#520400"/><rect x="176.68" y="351.96" width="12.92" height="25.44" fill="#520400"/><rect x="189.30" y="351.96" width="12.92" height="25.44" fill="#530500"/><rect x="201.92" y="351.96" width="12.92" height="25.44" fill="#540500"/><rect x="214.54" y="351.96" width="12.92" height="25.44" fill="#550500"/><rect x="227.16" y="351.96" width="12.92" height="25.44" fill="#560500"/><rect x="239.78" y="351.96" width="12.92" height="25.44" fill="#560500"/><rect x="252.40" y="351.96" width="12.92" height="25.44" fill="#570500"/><rect x="265.02" y="351.96" width="12.92" height="25.44" fill="#580500"/><rect x="277.64" y="351.96" width="12.92" height="25.44" fill="#580500"/><rect x="290.26" y="351.96" width="12.92" height="25.44" fill="#570500"/><rect x="302.88" y="351.96" width="12.92" height="25.44" fill="#560500"/><rect x="315.50" y="351.96" width="12.92" height="25.44" fill="#550500"/><rect x="328.12" y="351.96" width="12.92" height="25.44" fill="#540500"/><rect x="340.74" y="351.96" width="12.92" height="25.44" fill="#530500"/><rect x="353.36" y="351.96" width="12.92" height="25.44" fill="#530400"/><rect x="365.98" y="351.96" width="12.92" height="25.44" fill="#520400"/><rect x="378.60" y="351.96" width="12.92" height="25.44" fill="#510400"/><rect x="391.22" y="351.96" width="12.92" height="25.44" fill="#510400"/><rect x="403.84" y="351.96" width="12.92" height="25.44" fill="#500400"/><rect x="416.46" y="351.96" width="12.92" height="25.44" fill="#500400"/><rect x="151.44" y="377.10" width="12.92" height="25.44" fill="#510400"/><rect x="164.06" y="377.10" width="12.92" height="25.44" fill="#510400"/><rect x="176.68" y="377.10" width="12.92" height="25.44" fill="#510400"/><rect x="189.30" y="377.10" width="12.92" height="25.44" fill="#510400"/><rect x="201.92" y="377.10" width="12.92" height="25.44" fill="#520400"/><rect x="214.54" y="377.10" width="12.92" height="25.44" fill="#520400"/><rect x="227.16" y="377.10" width="12.92" height="25.44" fill="#520400"/><rect x="239.78" y="377.10" width="12.92" height="25.44" fill="#530400"/><rect x="252.40" y="377.10" width="12.92" height="25.44" fill="#530500"/><rect x="265.02" y="377.10" width="12.92" height="25.44" fill="#530500"/><rect x="277.64" y="377.10" width="12.92" height="25.44" fill="#530500"/><rect x="290.26" y="377.10" width="12.92" height="25.44" fill="#530500"/><rect x="302.88" y="377.10" width="12.92" height="25.44" fill="#530400"/><rect x="315.50" y="377.10" width="12.92" height="25.44" fill="#520400"/><rect x="328.12" y="377.10" width="12.92" height="25.44" fill="#520400"/><rect x="340.74" y="377.10" width="12.92" height="25.44" fill="#510400"/><rect x="353.36" y="377.10" width="12.92" height="25.44" fill="#510400"/><rect x="365.98" y="377.10" width="12.92" height="25.44" fill="#500400"/><rect x="378.60" y="377.10" width="12.92" height="25.44" fill="#500400"/><rect x="391.22" y="377.10" width="12.92" height="25.44" fill="#500400"/></g></defs></svg>
<div class="a" style="left:44px;top:24px;width:1197px;height:914px;background:repeating-linear-gradient(#f0f0f0 0 2px,#f3f3f3 2px 4px);border-radius:7px 7px 0 0;"></div>
<div class="a" style="left:44px;top:24px;width:1197px;height:27px;background:linear-gradient(#f6f6f6,#eeeeee);border-radius:7px 7px 0 0;border-bottom:1px solid #c4c4c4;"></div>
<div class="a" style="left:53.9px;top:28.299999999999997px;width:18px;height:18px;border-radius:50%;background:linear-gradient(#eeeeee 0%,#e2e2e2 35%,#d8d8d8 55%,#f2f2f2 85%,#fafafa 100%);border:2px solid #ababab;border-top-color:#9c9c9c;border-bottom-color:#c2c2c2"></div>
<div class="a" style="left:80.2px;top:28.299999999999997px;width:18px;height:18px;border-radius:50%;background:linear-gradient(#eeeeee 0%,#e2e2e2 35%,#d8d8d8 55%,#f2f2f2 85%,#fafafa 100%);border:2px solid #ababab;border-top-color:#9c9c9c;border-bottom-color:#c2c2c2"></div>
<div class="a" style="left:106.5px;top:28.299999999999997px;width:18px;height:18px;border-radius:50%;background:linear-gradient(#eeeeee 0%,#e2e2e2 35%,#d8d8d8 55%,#f2f2f2 85%,#fafafa 100%);border:2px solid #ababab;border-top-color:#9c9c9c;border-bottom-color:#c2c2c2"></div>
<div class="a" style="left:1206px;top:31px;width:25px;height:13px;border-radius:7px;border:2px solid #8c8c8c;background:linear-gradient(#f4f4f4,#e4e4e4 55%,#fafafa)"></div>
<svg style="left:330px;top:25px" width="28" height="24" viewBox="0 0 28 24"><path d="M5 12.5 L20 3.5" stroke="#70d0fa" stroke-width="4" stroke-linecap="round"/><path d="M11 11 L8 20 M11 11 L12 20 M11 11 L15 19" stroke="#555" stroke-width="1.3" fill="none"/></svg>
<div class="a t" style="left:359.5px;top:29.5px;font-size:16px;color:#727272;letter-spacing:1.12px;">QFitsView by Thomas Ott - /Users/mjh/burntemp/cube_star_K_0.025.fits</div>
<div class="a" style="left:44px;top:51px;width:1197px;height:42px;background:#ebebeb;border-top:2px solid #d0d0d0;border-bottom:1px solid #9a9a9a;"></div>
<div class="a" style="left:44px;top:91px;width:1197px;height:1px;background:#c8c8c8"></div>
<svg style="left:47px;top:56px" width="9" height="35"><path d="M2.5 34 L2.5 0 M6.5 34 L6.5 0 M0 34.5 L7 34.5" stroke="#8a8a8a" stroke-width="1.2" fill="none"/><path d="M4 0 L4 33" stroke="#fff" stroke-width="2"/></svg>
<div class="a" style="left:56px;top:53px;width:41px;height:38px;background:#f0f0f0;box-shadow:inset -1px -1px 0 #d6d6d6, inset 1px 1px 0 #f8f8f8;"></div>
<div class="a" style="left:99px;top:53px;width:39px;height:38px;background:#f0f0f0;box-shadow:inset -1px -1px 0 #d6d6d6, inset 1px 1px 0 #f8f8f8;"></div>
<div class="a" style="left:140px;top:53px;width:34px;height:38px;background:#f0f0f0;box-shadow:inset -1px -1px 0 #d6d6d6, inset 1px 1px 0 #f8f8f8;"></div>
<div class="a" style="left:187px;top:53px;width:40px;height:38px;background:#f0f0f0;box-shadow:inset -1px -1px 0 #d6d6d6, inset 1px 1px 0 #f8f8f8;"></div>
<div class="a" style="left:243px;top:53px;width:32px;height:38px;background:#f0f0f0;box-shadow:inset -1px -1px 0 #d6d6d6, inset 1px 1px 0 #f8f8f8;"></div>
<div class="a" style="left:277px;top:53px;width:32px;height:38px;background:#f0f0f0;box-shadow:inset -1px -1px 0 #d6d6d6, inset 1px 1px 0 #f8f8f8;"></div>
<div class="a" style="left:311px;top:53px;width:37px;height:38px;background:#f0f0f0;box-shadow:inset -1px -1px 0 #d6d6d6, inset 1px 1px 0 #f8f8f8;"></div>
<div class="a" style="left:350px;top:53px;width:32px;height:38px;background:#f0f0f0;box-shadow:inset -1px -1px 0 #d6d6d6, inset 1px 1px 0 #f8f8f8;"></div>
<div class="a" style="left:396px;top:53px;width:38px;height:38px;background:#f0f0f0;box-shadow:inset -1px -1px 0 #d6d6d6, inset 1px 1px 0 #f8f8f8;"></div>
<div class="a" style="left:436px;top:53px;width:38px;height:38px;background:#f0f0f0;box-shadow:inset -1px -1px 0 #d6d6d6, inset 1px 1px 0 #f8f8f8;"></div>
<div class="a" style="left:988px;top:53px;width:40px;height:38px;background:#f0f0f0;box-shadow:inset -1px -1px 0 #d6d6d6, inset 1px 1px 0 #f8f8f8;"></div>
<div class="a" style="left:1030px;top:53px;width:39px;height:38px;background:#f0f0f0;box-shadow:inset -1px -1px 0 #d6d6d6, inset 1px 1px 0 #f8f8f8;"></div>
<div class="a" style="left:1071px;top:53px;width:39px;height:38px;background:#f0f0f0;box-shadow:inset -1px -1px 0 #d6d6d6, inset 1px 1px 0 #f8f8f8;"></div>
<div class="a" style="left:1112px;top:53px;width:39px;height:38px;background:#f0f0f0;box-shadow:inset -1px -1px 0 #d6d6d6, inset 1px 1px 0 #f8f8f8;"></div>
<div class="a" style="left:1153px;top:53px;width:39px;height:38px;background:#f0f0f0;box-shadow:inset -1px -1px 0 #d6d6d6, inset 1px 1px 0 #f8f8f8;"></div>
<div class="a" style="left:1194px;top:53px;width:40px;height:38px;background:#f0f0f0;box-shadow:inset -1px -1px 0 #d6d6d6, inset 1px 1px 0 #f8f8f8;"></div>
<div class="a" style="left:178px;top:51px;width:2px;height:42px;background:#7a7a7a;"></div>
<div class="a" style="left:228px;top:51px;width:2px;height:42px;background:#7a7a7a;"></div>
<div class="a" style="left:383px;top:51px;width:2px;height:42px;background:#7a7a7a;"></div>
<div class="a" style="left:474px;top:51px;width:2px;height:42px;background:#7a7a7a;"></div>
<div class="a" style="left:626px;top:51px;width:2px;height:42px;background:#7a7a7a;"></div>
<div class="a" style="left:975px;top:51px;width:2px;height:42px;background:#7a7a7a;"></div>
<svg style="left:232px;top:56px" width="9" height="35"><path d="M2.5 34 L2.5 0 M6.5 34 L6.5 0 M0 34.5 L7 34.5" stroke="#8a8a8a" stroke-width="1.2" fill="none"/><path d="M4 0 L4 33" stroke="#fff" stroke-width="2"/></svg>
<svg style="left:387px;top:56px" width="9" height="35"><path d="M2.5 34 L2.5 0 M6.5 34 L6.5 0 M0 34.5 L7 34.5" stroke="#8a8a8a" stroke-width="1.2" fill="none"/><path d="M4 0 L4 33" stroke="#fff" stroke-width="2"/></svg>
<svg style="left:479px;top:57px" width="9" height="30"><path d="M2.5 29 L2.5 0 M6.5 29 L6.5 0 M0 29.5 L7 29.5" stroke="#8a8a8a" stroke-width="1.2" fill="none"/><path d="M4 0 L4 28" stroke="#fff" stroke-width="2"/></svg>
<svg style="left:630px;top:60px" width="9" height="24"><path d="M2.5 23 L2.5 0 M6.5 23 L6.5 0 M0 23.5 L7 23.5" stroke="#8a8a8a" stroke-width="1.2" fill="none"/><path d="M4 0 L4 22" stroke="#fff" stroke-width="2"/></svg>
<svg style="left:978px;top:58px" width="9" height="31"><path d="M2.5 30 L2.5 0 M6.5 30 L6.5 0 M0 30.5 L7 30.5" stroke="#8a8a8a" stroke-width="1.2" fill="none"/><path d="M4 0 L4 29" stroke="#fff" stroke-width="2"/></svg>
<svg style="left:61px;top:60px" width="32" height="28" viewBox="0 0 32 28">
<path d="M2 8 L2 24 L22 24 L22 12 L13 12 L11 8 Z" fill="#f4f07c" stroke="#111" stroke-width="1.4"/>
<path d="M2 25 L9 15 L30 15 L23 25 Z" fill="#a8a41c" stroke="#111" stroke-width="1.6" stroke-linejoin="round"/>
<path d="M15 6 Q21 1 26 6" stroke="#111" stroke-width="1.6" fill="none"/><path d="M23 4 L29 4 L28 10 Z" fill="#111"/>
</svg>
<svg style="left:104px;top:59px" width="28" height="28" viewBox="0 0 28 28">
<rect x="1" y="1" width="25.5" height="25.5" rx="1" fill="#a8a420" stroke="#222" stroke-width="1.4"/>
<rect x="5" y="2" width="17" height="11" fill="#d4d4d4"/><rect x="21" y="2" width="3" height="4" fill="#fff"/>
<rect x="5" y="18" width="17" height="8" fill="#111"/><rect x="17" y="20" width="4" height="6" fill="#ccc"/>
</svg>
<svg style="left:145px;top:62px" width="24" height="22" viewBox="0 0 24 22">
<path d="M6 2 L18 2 L19 8 L5 8 Z" fill="#eee" stroke="#333" stroke-width="1.2"/>
<rect x="1.5" y="8" width="20" height="9" rx="3" fill="#bbb" stroke="#222" stroke-width="1.6"/>
<rect x="4" y="15" width="15" height="4" fill="#444"/><rect x="9" y="12" width="5" height="2" fill="#e8e020"/>
</svg>
<svg style="left:191px;top:60px" width="30" height="28" viewBox="0 0 30 28">
<path d="M2 2 L11 2 L13 4 L13 19 L2 19 Z" fill="#fff" stroke="#111" stroke-width="1.4"/>
<path d="M4 6h5M4 10h7M4 13h7M4 16h7" stroke="#333" stroke-width="1.2"/>
<path d="M12 8 L21 8 L27 14 L27 26 L12 26 Z" fill="#e4e4f8" stroke="#4848d8" stroke-width="1.5" stroke-linejoin="round"/>
<path d="M15 12h5M15 16h9M15 19h9M15 23h9" stroke="#333" stroke-width="1.2"/>
</svg>
<svg style="left:249px;top:63px" width="18" height="18" viewBox="0 0 18 18"><path d="M8.8 4.2 A5.9 5.9 0 1 1 3.26 8.08" stroke="#111" stroke-width="1.5" fill="none"/><path d="M4.6 4.2 L9.4 0.9 L9.4 7.5 Z" fill="#111"/></svg>
<svg style="left:284px;top:63px" width="18" height="18" viewBox="0 0 18 18"><g transform="translate(17.6,0) scale(-1,1)"><path d="M8.8 4.2 A5.9 5.9 0 1 1 3.26 8.08" stroke="#111" stroke-width="1.5" fill="none"/><path d="M4.6 4.2 L9.4 0.9 L9.4 7.5 Z" fill="#111"/></g></svg>
<svg style="left:320px;top:68px" width="17" height="11" viewBox="0 0 17 11">
<path d="M4 5.4 L12.5 5.4" stroke="#111" stroke-width="1.4"/><path d="M1.5 5.4 L5 2.2 L5.8 5.4 L5 8.6 Z M15 5.4 L11.5 2.2 L10.7 5.4 L11.5 8.6 Z" fill="#111"/>
</svg>
<svg style="left:359px;top:65px" width="11" height="17" viewBox="0 0 11 17">
<path d="M5.5 4 L5.5 12.5" stroke="#111" stroke-width="1.4"/><path d="M5.5 1.7 L2.3 5 L5.5 5.8 L8.7 5 Z M5.5 14.5 L2.3 11.2 L5.5 10.4 L8.7 11.2 Z" fill="#111"/>
</svg>
<svg style="left:400px;top:60px" width="30" height="28" viewBox="0 0 30 28">
<circle cx="17.9" cy="9.6" r="6.4" stroke="#111" stroke-width="1.4" fill="none"/><path d="M13.3 14.3 L2.6 25" stroke="#111" stroke-width="1.6"/><path d="M17.2 21h8.8M21.3 17.2v8.2" stroke="#111" stroke-width="1.7"/></svg>
<svg style="left:440px;top:60px" width="30" height="28" viewBox="0 0 30 28">
<circle cx="16.6" cy="9.6" r="6.4" stroke="#111" stroke-width="1.4" fill="none"/><path d="M12.1 14.3 L2 25" stroke="#111" stroke-width="1.6"/><path d="M16 21h8.8" stroke="#111" stroke-width="1.7"/></svg>
<div class="a" style="left:488px;top:56px;width:52px;height:31px;background:#ebebeb;box-shadow:inset 0 0 0 1px #dcdcdc;"></div>
<div class="a t" style="left:494px;top:62px;font-size:15px;color:#a0a0a0;">1280</div>
<div class="a" style="left:543px;top:57px;width:15px;height:28px;background:#f2f2f2;border-radius:7px;box-shadow:inset 0 0 0 1px #c8c8c8;"></div>
<svg style="left:543px;top:57px" width="15" height="28"><path d="M4.5 11 L7.5 7 L10.5 11 Z M4.5 17 L7.5 21 L10.5 17 Z" fill="#777"/></svg>
<div class="a" style="left:565px;top:56px;width:60px;height:32px;background:#ededed;box-shadow:inset 0 0 0 1px #c8c8c8;"></div>
<div class="a t" style="left:574px;top:60px;font-size:15px;color:#8a8a8a;letter-spacing:0.4px;">Movie</div>
<div class="a" style="left:638px;top:58px;width:134px;height:28px;background:#fff;box-shadow:inset 0 1px 0 #d0d0d0;"></div>
<div class="a" style="left:773px;top:58px;width:132px;height:28px;background:#fff;box-shadow:inset 0 1px 0 #d0d0d0;"></div>
<div class="a t" style="left:641px;top:62px;font-size:15px;color:#8a8a8a;">-12.15</div>
<div class="a t" style="left:775px;top:62px;font-size:15px;color:#8a8a8a;">70</div>
<div class="a" style="left:909px;top:63px;width:18px;height:17px;background:linear-gradient(#fafafa,#e8e8e8);border-radius:3px;box-shadow:inset 0 0 0 1px #b8b8b8;"></div>
<div class="a t" style="left:935px;top:60px;font-size:15px;color:#8a8a8a;">Auto</div>
<svg style="left:988px;top:52px" width="250" height="40" viewBox="0 0 250 40">
<path d="M9.5 21h19M19 11.5v19" stroke="#111" stroke-width="3"/>
<path d="M51 21h20" stroke="#111" stroke-width="3"/>
<path d="M95.5 16.5l11 10M106.5 16.5l-11 10" stroke="#111" stroke-width="2.2"/>
<path d="M133 21h20.5" stroke="#111" stroke-width="2.4"/><circle cx="143.3" cy="14.3" r="1.7" fill="#111"/><circle cx="143.3" cy="27.7" r="1.7" fill="#111"/>
<path d="M175.5 21.5l7.5-7 7.5 7" stroke="#111" stroke-width="2.6" fill="none"/>
<circle cx="225" cy="21" r="11" stroke="#111" stroke-width="1.8" fill="none"/><path d="M219 15l12 12M231 15l-12 12" stroke="#111" stroke-width="1.9"/>
</svg>
<div class="a" style="left:44px;top:93px;width:190px;height:519px;background:repeating-linear-gradient(#f0f0f0 0 2px,#f3f3f3 2px 4px);"></div>
<svg style="left:47px;top:104px" width="168" height="8"><path d="M1 1.5 H165 M1 5.5 H165 M165 0 V7" stroke="#8c8c8c" stroke-width="1.3" fill="none"/></svg>
<div class="a" style="left:216px;top:98px;width:16px;height:16px;background:#f2f2f2;box-shadow:inset 0 0 0 1px #d4d4d4;"></div>
<svg style="left:216px;top:98px" width="16" height="16"><path d="M4.8 4.8l6.4 6.4M11.2 4.8l-6.4 6.4" stroke="#111" stroke-width="1.9"/></svg>
<div class="a" style="left:45px;top:118px;width:187px;height:50px;background:#f0f0f0;border-top:2px solid #8a8a8a;border-left:1px solid #9a9a9a;border-bottom:2px solid #7a7a7a;border-right:1px solid #fff;"></div>
<div class="a t" style="left:45px;top:123.2px;width:187px;text-align:center;font-size:13px;color:#8a8a8a;letter-spacing:0.25px;">23 48 68.950</div>
<div class="a t" style="left:45px;top:138px;width:187px;text-align:center;font-size:13px;color:#8a8a8a;letter-spacing:0.2px;">16:48:02.087 -15°57'52.84&quot;</div>
<div class="a" style="left:45px;top:169px;width:189px;height:380px;background:#fff;"></div>
<svg style="left:46px;top:170px;overflow:hidden" width="186" height="188" viewBox="0 0 186 188"><rect width="186" height="188" fill="#510400"/><g transform="translate(-50.75,-7.50) scale(0.5)"><use href="#star2"/></g><rect x="87.5" y="92.5" width="8" height="8" fill="none" stroke="#10d030" stroke-width="2"/></svg>
<div class="a" style="left:46px;top:362px;width:186px;height:186px;background:#000;"></div>
<div class="a t" style="left:46px;top:364px;width:186px;text-align:center;font-size:16px;color:#10d030;font-weight:bold;letter-spacing:0.75px;">60x64&nbsp;&nbsp;100%</div>
<svg style="left:101px;top:414px;overflow:hidden" width="77" height="82" viewBox="0 0 77 82"><defs><radialGradient id="s2" cx="0.5" cy="0.5" r="0.5"><stop offset="0" stop-color="#fcf8c8"/><stop offset="0.3" stop-color="#f0d070"/><stop offset="0.5" stop-color="#b04010"/><stop offset="0.75" stop-color="#701008" stop-opacity="0.7"/><stop offset="1" stop-color="#4f0400" stop-opacity="0"/></radialGradient></defs><rect width="77" height="82" fill="#4f0400"/><ellipse cx="28.5" cy="22.6" rx="9" ry="6.5" fill="url(#s2)"/></svg>
<div class="a" style="left:46px;top:555.5px;width:186px;height:2.0px;background:#2e2e2e;"></div>
<div class="a" style="left:233px;top:93px;width:1px;height:519px;background:#9a9a9a;"></div>
<div class="a" style="left:234px;top:93px;width:5px;height:519px;background:#fdfdfd;"></div>
<div class="a" style="left:238px;top:96px;width:1003px;height:516px;background:#f4f4f4;"></div>
<div class="a" style="left:239px;top:97px;width:981px;height:512px;background:#686765;box-shadow:inset 0 1px 0 #555;"></div>
<svg style="left:359px;top:98px;overflow:hidden" width="757" height="511" viewBox="0 0 757 511"><defs><linearGradient id="bgg"><stop offset="0" stop-color="#500400"/><stop offset="1" stop-color="#4d0400"/></linearGradient></defs><rect width="757" height="511" fill="url(#bgg)"/><use href="#star"/></svg>
<div class="a" style="left:1220px;top:97px;width:19px;height:512px;background:linear-gradient(90deg,#e4e4e4,#fafafa 40%,#f0f0f0);"></div>
<div class="a" style="left:1221px;top:104px;width:17px;height:464px;background:linear-gradient(90deg,#d0d0d0,#fdfdfd 45%,#e4e4e4);border-radius:8px;box-shadow:inset 0 2px 0 #9a9a9a, inset 0 0 0 1px #a8a8a8, inset 0 -3px 3px #c8c8c8;"></div>
<svg style="left:1222px;top:572px" width="15" height="34"><path d="M3 9.5 L7.5 3 L12 9.5 Z M3 23 L7.5 29.5 L12 23 Z" fill="#8c8c8c"/><path d="M1 16.5h13" stroke="#ddd"/></svg>
<div class="a" style="left:1239px;top:93px;width:2px;height:519px;background:#d8d8d8;"></div>
<div class="a" style="left:44px;top:609px;width:1197px;height:4px;background:#fcfcfc;"></div>
<div class="a" style="left:48px;top:613px;width:1193px;height:19px;background:linear-gradient(90deg,#fcf8c0 0.0%,#f8eeb1 4.2%,#f4e3a1 8.3%,#f0d992 12.5%,#e9c973 16.7%,#e0b951 20.8%,#dcac3b 25.0%,#d79e27 29.2%,#cd8a1d 33.3%,#c47716 37.5%,#bb6611 41.7%,#b14c0d 45.8%,#a72f08 50.0%,#9a1b08 54.2%,#8e1508 58.3%,#821108 62.5%,#760d05 66.7%,#6a0901 70.8%,#5e0600 75.0%,#520400 79.2%,#460300 83.3%,#3a0200 87.5%,#2f0100 91.7%,#230100 95.8%,#180000 100.0%);"></div>
<div class="a" style="left:44px;top:632px;width:1197px;height:6px;background:#fdfdfd;"></div>
<div class="a" style="left:44px;top:636px;width:1192px;height:1px;background:#7a7a7a;"></div>
<div class="a" style="left:44px;top:637px;width:1197px;height:301px;background:#fff;"></div>
<div class="a" style="left:1239px;top:637px;width:2px;height:301px;background:#8a8a8a;"></div>
<div class="a t" style="left:44.5px;top:642.3px;font-size:16px;color:#8e8e8e;letter-spacing:1.25px;">Minimum:</div>
<div class="a" style="left:132px;top:639px;width:63px;height:24px;background:#ebebeb;box-shadow:inset 0 1px 0 #d8d8d8;"></div>
<div class="a t" style="left:135px;top:643px;font-size:14.5px;color:#aaa;">0</div>
<div class="a t" style="left:195.5px;top:642.3px;font-size:16px;color:#8e8e8e;letter-spacing:1.25px;">Maximum:</div>
<div class="a" style="left:284px;top:639px;width:62px;height:24px;background:#ebebeb;box-shadow:inset 0 1px 0 #d8d8d8;"></div>
<div class="a t" style="left:286px;top:643px;font-size:14.5px;color:#aaa;">100</div>
<div class="a" style="left:361px;top:641px;width:18px;height:19px;background:linear-gradient(#fafafa,#e6e6e6);border-radius:3px;box-shadow:inset 0 0 0 1px #c0c0c0;"></div>
<svg style="left:361px;top:636px" width="20" height="24"><path d="M4.5 12.5 L8.8 19 L15.5 3.5" stroke="#707070" stroke-width="2.6" fill="none"/></svg>
<div class="a t" style="left:388.5px;top:640.5px;font-size:14.5px;color:#8a8a8a;letter-spacing:0.45px;">Auto Scale</div>
<div class="a" style="left:486px;top:639px;width:124px;height:23px;background:linear-gradient(#f8f8f8,#ececec);border-radius:4px;box-shadow:inset 0 0 0 1px #c4c4c4, 0 1px 0 #d0d0d0;"></div>
<div class="a t" style="left:490px;top:639.5px;font-size:15px;color:#8a8a8a;letter-spacing:0.3px;">Circular</div>
<svg style="left:592px;top:639px" width="14" height="22"><path d="M4 9 L7 5 L10 9 Z M4 13 L7 17 L10 13 Z" fill="#888"/></svg>
<div class="a t" style="left:624.5px;top:640.5px;font-size:15px;color:#8a8a8a;letter-spacing:0.6px;">R1:</div>
<div class="a" style="left:650px;top:639px;width:38px;height:24px;background:#f4f4f4;box-shadow:inset 0 1px 0 #dadada;"></div>
<div class="a t" style="left:654px;top:642px;font-size:14.5px;color:#aaa;">6</div>
<div class="a" style="left:690px;top:640px;width:16px;height:24px;background:#f4f4f4;border-radius:7px;box-shadow:inset 0 0 0 1px #c8c8c8;"></div>
<svg style="left:690px;top:640px" width="16" height="24"><path d="M5 9 L8 5.5 L11 9 Z M5 15 L8 18.5 L11 15 Z" fill="#777"/></svg>
<div class="a t" style="left:725px;top:640.5px;font-size:15px;color:#8a8a8a;letter-spacing:0.6px;">R2:</div>
<div class="a" style="left:751px;top:639px;width:38px;height:24px;background:#f4f4f4;box-shadow:inset 0 1px 0 #dadada;"></div>
<div class="a t" style="left:755px;top:642px;font-size:14.5px;color:#aaa;">2</div>
<div class="a" style="left:791px;top:640px;width:16px;height:24px;background:#f4f4f4;border-radius:7px;box-shadow:inset 0 0 0 1px #c8c8c8;"></div>
<svg style="left:791px;top:640px" width="16" height="24"><path d="M5 9 L8 5.5 L11 9 Z M5 15 L8 18.5 L11 15 Z" fill="#777"/></svg>
<div class="a" style="left:815px;top:642px;width:18px;height:18px;background:linear-gradient(#fafafa,#e6e6e6);border-radius:3px;box-shadow:inset 0 0 0 1px #c0c0c0;"></div>
<div class="a t" style="left:843px;top:640px;font-size:14.5px;color:#8a8a8a;letter-spacing:0.55px;">Divide Std</div>
<div class="a" style="left:939px;top:639px;width:126px;height:23px;background:#ececec;"></div>
<div class="a t" style="left:940.5px;top:641px;font-size:17px;color:#9a9a9a;letter-spacing:0.6px;">2.26269</div>
<svg style="left:0px;top:0px" width="1280" height="965" viewBox="0 0 1280 965"><path d="M68.50 876.6 L69.10 788.6 L69.30 829.6 L69.10 821.5 L69.70 806.1 L70.30 824.8 L70.90 818.6 L71.50 818.9 L72.10 795.4 L72.70 800.3 L73.30 800.6 L73.70 786.3 L73.90 811.4 L73.90 802.1 L74.50 796.5 L75.10 791.1 L75.70 782.9 L76.30 783.2 L76.90 790.2 L77.50 788.1 L78.10 776.7 L78.20 770.3 L78.40 797.7 L78.70 782.0 L79.30 803.2 L79.90 815.0 L80.50 820.0 L81.10 812.8 L81.70 810.5 L82.30 835.2 L82.80 806.8 L83.00 847.9 L82.90 824.0 L83.50 830.3 L84.10 840.3 L84.70 833.0 L85.30 825.7 L85.90 825.9 L86.50 839.3 L87.10 833.3 L87.40 827.4 L87.60 852.4 L87.70 829.7 L88.30 830.9 L88.90 848.1 L89.50 841.0 L90.10 822.8 L90.70 823.2 L91.30 827.5 L91.90 825.4 L91.90 813.7 L92.10 841.0 L92.50 832.1 L93.10 810.8 L93.70 797.1 L94.30 811.3 L94.90 779.0 L95.50 801.6 L96.10 759.9 L96.50 754.4 L96.70 825.1 L96.70 765.5 L97.30 810.4 L97.90 803.2 L98.50 788.0 L99.10 795.7 L99.70 809.0 L100.30 801.0 L100.90 770.0 L101.00 765.8 L101.20 811.4 L101.50 771.2 L102.10 787.8 L102.70 807.7 L103.30 777.3 L103.90 803.0 L104.50 802.5 L105.10 805.9 L105.60 788.6 L105.80 829.6 L105.70 810.8 L106.30 824.7 L106.90 800.8 L107.50 779.8 L108.10 795.0 L108.70 775.0 L109.30 795.9 L109.90 764.6 L110.20 756.7 L110.40 797.7 L110.50 771.0 L111.10 771.7 L111.70 787.7 L112.30 780.4 L112.90 787.3 L113.50 773.6 L114.10 781.2 L114.70 776.5 L114.70 756.7 L114.90 784.0 L115.30 761.0 L115.90 756.3 L116.50 754.9 L117.10 748.2 L117.70 768.2 L118.30 768.7 L118.90 738.8 L119.30 733.9 L119.50 781.7 L119.50 748.8 L120.10 766.9 L120.70 780.0 L121.30 766.3 L121.90 773.5 L122.50 746.6 L123.10 742.7 L123.70 736.0 L123.90 736.1 L124.10 781.7 L124.30 770.6 L124.90 745.1 L125.50 768.6 L126.10 747.4 L126.70 749.6 L127.30 734.2 L127.90 760.3 L128.40 727.0 L128.60 761.2 L128.50 740.6 L129.10 733.4 L129.70 747.5 L130.30 720.7 L130.90 718.3 L131.50 708.6 L132.10 737.2 L132.70 718.6 L133.00 699.6 L133.20 733.9 L133.30 725.2 L133.90 717.8 L134.50 704.9 L135.10 710.2 L135.70 721.7 L136.30 711.5 L136.90 706.5 L137.50 708.5 L137.50 706.5 L137.70 720.2 L138.10 712.8 L138.70 719.8 L139.30 708.5 L139.90 743.0 L140.50 720.5 L141.10 728.1 L141.70 711.2 L142.10 711.0 L142.30 772.6 L142.30 767.9 L142.90 758.2 L143.50 707.8 L144.10 739.6 L144.70 709.6 L145.30 718.1 L145.90 701.3 L146.50 713.2 L146.70 697.4 L146.90 711.0 L147.10 705.0 L147.70 710.3 L148.30 699.9 L148.90 701.7 L149.50 705.7 L150.10 706.3 L150.70 701.0 L151.20 697.4 L151.40 708.8 L151.30 706.9 L151.90 703.6 L152.50 714.9 L153.10 700.6 L153.70 728.3 L154.30 707.3 L154.90 742.1 L155.50 751.6 L155.80 704.2 L156.00 761.2 L156.10 705.6 L156.70 728.7 L157.30 733.9 L157.90 719.1 L158.50 701.1 L159.10 736.1 L159.70 719.7 L160.30 726.4 L160.30 697.4 L160.50 727.0 L160.90 722.8 L161.50 731.7 L162.10 733.0 L162.70 717.6 L163.30 704.3 L163.90 728.3 L164.50 716.9 L164.90 701.9 L165.10 745.3 L165.10 726.3 L165.70 718.0 L166.30 743.4 L166.90 716.8 L167.50 703.7 L168.10 737.5 L168.70 724.9 L169.30 732.4 L169.50 697.4 L169.70 740.7 L169.90 705.0 L170.50 734.4 L171.10 729.4 L171.70 710.2 L172.30 712.9 L172.90 710.1 L173.50 705.2 L174.00 699.6 L174.20 715.6 L174.10 703.0 L174.70 702.5 L175.30 707.5 L175.90 712.4 L176.50 732.5 L177.10 712.5 L177.70 738.4 L178.30 732.3 L178.60 715.6 L178.80 749.8 L178.90 723.1 L179.50 750.3 L180.10 749.9 L180.70 737.7 L181.30 765.2 L181.90 747.8 L182.50 781.6 L183.10 758.2 L183.10 756.7 L183.30 793.1 L183.70 771.8 L184.30 788.9 L184.90 780.1 L185.50 784.6 L186.10 787.6 L186.70 799.1 L187.30 797.2 L187.70 795.4 L187.90 811.4 L187.90 811.4 L188.50 809.8 L189.10 818.4 L189.70 826.1 L190.30 815.9 L190.90 823.4 L191.50 839.6 L192.10 843.5 L192.30 829.6 L192.50 847.9 L192.70 841.8 L193.30 850.6 L193.90 850.6 L194.50 845.7 L195.10 856.4 L195.70 848.5 L196.30 859.1 L196.80 850.2 L197.00 861.6 L196.90 860.6 L197.50 858.4 L198.10 852.4 L198.70 864.9 L199.30 853.9 L199.90 865.8 L200.50 858.1 L201.10 854.7 L201.40 852.4 L201.60 870.7 L201.70 858.9 L202.30 861.8 L202.90 858.0 L203.50 845.9 L204.10 830.2 L204.70 828.0 L205.30 820.7 L205.90 819.9 L206.00 797.7 L206.20 838.8 L206.50 801.2 L207.10 819.4 L207.70 806.3 L208.30 808.6 L208.90 824.6 L209.50 822.1 L210.10 835.6 L210.50 806.8 L210.70 841.0 L210.70 807.6 L211.30 820.9 L211.90 829.0 L212.50 839.2 L213.10 836.4 L213.70 833.6 L214.30 833.1 L214.90 840.1 L215.10 813.7 L215.30 845.6 L215.50 825.0 L216.10 839.9 L216.70 845.4 L217.30 811.2 L217.90 822.6 L218.50 811.0 L219.10 838.1 L219.60 806.8 L219.80 847.9 L219.70 835.2 L220.30 828.5 L220.90 812.8 L221.50 827.3 L222.10 804.6 L222.70 812.8 L223.30 822.5 L223.90 827.3 L224.20 797.7 L224.40 829.6 L224.50 817.0 L225.10 810.6 L225.70 811.3 L226.30 800.9 L226.90 805.5 L227.50 821.5 L228.10 805.0 L228.70 808.2 L228.80 788.6 L229.00 818.2 L229.30 789.6 L229.90 813.1 L230.50 797.4 L231.10 798.4 L231.70 787.0 L232.30 795.4 L232.90 799.4 L233.30 779.5 L233.50 797.7 L233.50 779.8 L234.10 786.7 L234.70 787.9 L235.30 775.7 L235.90 779.9 L236.50 759.6 L237.10 768.9 L237.70 756.5 L237.90 745.3 L238.10 777.2 L238.30 751.8 L238.90 761.0 L239.50 767.6 L240.10 742.3 L240.70 760.5 L241.30 750.0 L241.90 751.1 L242.40 738.4 L242.60 752.1 L242.50 740.0 L243.10 741.1 L243.70 734.2 L244.30 739.8 L244.90 741.5 L245.50 733.2 L246.10 741.1 L246.70 733.1 L247.00 720.2 L247.20 738.4 L247.30 733.0 L247.90 722.1 L248.50 732.8 L249.10 721.8 L249.70 733.6 L250.00 722.5 L250.20 733.9 L250.30 721.3 L250.90 728.8 L251.50 724.7 L251.60 715.6 L251.80 731.6 L252.10 726.9 L252.70 714.0 L253.30 714.3 L253.90 722.1 L254.50 717.5 L254.60 711.0 L254.80 724.7 L255.10 724.2 L255.70 718.3 L256.10 708.8 L256.30 724.7 L256.30 713.9 L256.90 721.0 L257.50 720.1 L258.10 716.3 L258.70 716.7 L259.10 706.5 L259.30 717.9 L259.30 712.4 L259.90 710.9 L260.50 717.2 L261.10 706.1 L261.70 716.5 L262.30 714.3 L262.90 705.4 L263.50 712.1 L263.70 704.2 L263.90 715.6 L264.10 714.0 L264.70 713.5 L265.30 713.6 L265.90 713.1 L266.50 713.9 L267.10 705.8 L267.70 705.5 L268.20 704.2 L268.40 713.3 L268.30 709.6 L268.90 706.2 L269.50 711.8 L270.10 710.7 L270.70 709.3 L271.30 711.9 L271.90 707.9 L272.50 705.8 L272.80 699.6 L273.00 713.3 L273.10 704.2 L273.70 706.4 L274.30 705.2 L274.90 707.8 L275.50 704.6 L276.10 708.7 L276.70 711.6 L277.30 707.6 L277.40 706.5 L277.60 713.3 L277.90 707.6 L278.50 713.5 L279.10 713.0 L279.70 710.8 L280.30 705.9 L280.90 713.4 L281.50 705.9 L281.90 705.3 L282.10 714.5 L282.10 710.7 L282.70 706.2 L283.30 706.2 L283.90 712.6 L284.50 709.6 L285.10 711.7 L285.70 706.0 L286.30 708.3 L286.50 705.3 L286.70 715.6 L286.90 705.2 L287.50 705.6 L288.10 704.7 L288.70 713.6 L289.30 709.6 L289.90 710.1 L290.50 705.1 L291.00 703.1 L291.20 713.3 L291.10 710.9 L291.70 712.8 L292.30 710.0 L292.90 712.5 L293.50 714.9 L294.10 713.8 L294.70 726.0 L295.30 722.8 L295.60 715.6 L295.80 729.3 L295.90 723.9 L296.50 719.9 L297.10 721.4 L297.70 726.9 L298.30 740.0 L298.90 741.7 L299.50 733.0 L300.10 741.3 L300.20 731.6 L300.40 749.8 L300.70 745.2 L301.30 751.8 L301.90 754.0 L302.50 747.0 L303.10 759.5 L303.70 748.0 L304.30 749.2 L304.70 749.8 L304.90 765.8 L304.90 757.1 L305.50 757.2 L306.10 769.2 L306.70 756.7 L307.30 769.4 L307.90 767.5 L308.50 774.8 L309.10 764.5 L309.30 761.2 L309.50 777.2 L309.70 776.6 L310.30 769.8 L310.90 776.9 L311.50 762.9 L312.10 775.5 L312.70 765.1 L313.30 775.0 L313.90 756.7 L314.10 779.5 L313.90 776.5 L314.50 773.4 L315.10 756.8 L315.70 759.2 L316.30 751.4 L316.90 763.7 L317.50 747.7 L318.10 754.3 L318.40 745.3 L318.60 768.1 L318.70 764.5 L319.30 739.2 L319.90 734.2 L320.50 746.9 L321.10 722.7 L321.70 744.5 L322.30 715.4 L322.90 714.4 L323.00 706.5 L323.20 736.1 L323.50 738.2 L324.10 725.7 L324.70 720.5 L325.30 743.8 L325.90 739.3 L326.50 743.5 L327.10 745.3 L327.50 731.6 L327.70 756.7 L327.70 733.0 L328.30 745.5 L328.90 736.4 L329.50 746.3 L330.10 752.7 L330.70 755.6 L331.30 733.4 L331.90 747.5 L332.10 731.6 L332.30 765.8 L332.50 752.8 L333.10 737.2 L333.70 741.4 L334.30 760.5 L334.90 758.0 L335.50 737.5 L336.10 752.7 L336.70 729.3 L336.90 761.2 L336.70 743.4 L337.30 748.0 L337.90 738.3 L338.50 742.0 L339.10 758.0 L339.70 733.8 L340.30 733.1 L340.90 742.7 L341.20 727.0 L341.40 756.7 L341.50 752.3 L342.10 750.6 L342.70 752.5 L343.30 754.2 L343.90 729.5 L344.50 753.9 L345.10 726.9 L345.70 723.2 L345.80 722.5 L346.00 758.9 L346.30 754.5 L346.90 731.9 L347.50 727.5 L348.10 740.6 L348.70 744.4 L349.30 746.1 L349.90 721.8 L350.30 711.0 L350.50 743.0 L350.50 731.0 L351.10 713.6 L351.70 711.7 L352.30 711.9 L352.90 724.9 L353.50 737.0 L354.10 726.8 L354.70 734.6 L354.90 708.8 L355.10 736.1 L355.30 714.4 L355.90 730.9 L356.50 726.6 L357.10 712.8 L357.70 710.6 L358.30 725.2 L358.90 710.8 L359.50 707.6 L359.70 722.5 L359.50 707.9 L360.10 707.4 L360.70 704.6 L361.30 704.3 L361.90 704.1 L362.50 709.7 L363.10 698.2 L363.70 698.5 L364.00 692.8 L364.20 706.5 L364.30 696.6 L364.90 702.2 L365.50 701.6 L366.10 699.5 L366.70 695.6 L367.30 702.3 L367.90 693.4 L368.50 701.3 L368.60 692.8 L368.80 701.9 L369.10 701.6 L369.70 695.4 L370.30 693.7 L370.90 700.1 L371.50 699.1 L372.10 697.9 L372.70 698.2 L373.10 695.1 L373.30 704.2 L373.30 703.9 L373.90 696.6 L374.50 702.9 L375.10 697.0 L375.70 695.7 L376.30 697.6 L376.90 704.6 L377.50 705.0 L377.70 695.1 L377.90 706.5 L378.10 698.4 L378.70 703.6 L379.30 695.3 L379.90 696.4 L380.50 699.9 L381.10 693.1 L381.70 694.8 L382.30 691.7 L382.50 701.9 L382.30 701.8 L382.90 699.3 L383.50 701.8 L384.10 699.7 L384.70 699.8 L385.30 695.0 L385.90 693.6 L386.50 697.0 L386.80 690.5 L387.00 701.9 L387.10 700.2 L387.70 692.6 L388.30 695.6 L388.90 696.2 L389.50 690.2 L390.10 695.2 L390.70 688.8 L391.30 698.2 L391.40 688.2 L391.60 699.6 L391.90 692.5 L392.50 692.7 L393.10 692.1 L393.70 691.0 L394.30 694.9 L394.90 692.0 L395.50 693.0 L396.00 690.5 L396.20 699.6 L396.10 691.7 L396.70 692.8 L397.30 690.0 L397.90 697.0 L398.50 695.9 L399.10 697.0 L399.70 691.7 L400.30 693.3 L400.50 688.2 L400.70 697.4 L400.90 690.5 L401.50 688.5 L402.10 688.0 L402.70 691.0 L403.30 695.9 L403.90 689.9 L404.50 688.8 L405.10 687.1 L405.30 695.1 L405.10 693.8 L405.70 690.6 L406.30 687.8 L406.90 696.7 L407.50 687.1 L408.10 690.9 L408.70 698.5 L409.30 690.6 L409.60 687.1 L409.80 699.6 L409.90 691.6 L410.50 687.8 L411.10 691.2 L411.70 697.0 L412.30 697.9 L412.90 692.0 L413.50 691.0 L414.10 689.6 L414.20 687.1 L414.40 697.4 L414.70 688.0 L415.30 695.2 L415.90 688.3 L416.50 688.6 L417.10 697.4 L417.70 689.8 L418.30 689.0 L418.80 688.2 L419.00 699.6 L418.90 699.5 L419.50 690.7 L420.10 696.1 L420.70 696.4 L421.30 689.5 L421.90 697.0 L422.50 690.7 L423.10 696.8 L423.30 689.4 L423.50 697.4 L423.70 692.4 L424.30 692.9 L424.90 693.3 L425.50 696.9 L426.10 690.6 L426.70 693.6 L427.30 690.8 L427.90 688.2 L428.10 697.4 L427.90 691.3 L428.50 697.4 L429.10 692.3 L429.70 700.4 L430.20 692.8 L430.40 711.0 L430.30 698.1 L430.90 705.4 L431.50 701.6 L432.10 698.3 L432.40 691.7 L432.60 701.9 L432.70 695.8 L433.30 691.7 L433.90 693.8 L434.50 694.7 L435.10 693.6 L435.70 696.4 L436.30 699.3 L436.90 696.3 L437.00 690.5 L437.20 699.6 L437.50 698.2 L438.10 692.6 L438.70 698.6 L439.30 695.9 L439.90 698.5 L440.00 691.7 L440.20 698.5 L440.50 695.9 L441.10 697.0 L441.60 691.7 L441.80 699.6 L441.70 692.5 L442.30 696.5 L442.90 691.4 L443.50 698.3 L444.10 691.2 L444.60 690.5 L444.80 699.6 L444.70 698.9 L445.30 694.3 L445.90 698.6 L446.10 691.7 L446.30 698.5 L446.50 692.4 L447.10 699.2 L447.70 695.2 L448.30 699.1 L448.90 699.7 L449.10 692.8 L449.30 701.9 L449.50 694.1 L450.10 694.3 L450.70 703.4 L451.30 702.6 L451.90 705.6 L452.50 702.2 L453.10 694.9 L453.70 693.9 L453.90 709.9 L453.70 694.8 L454.30 702.8 L454.90 693.7 L455.50 698.7 L456.10 696.6 L456.70 694.6 L457.30 704.6 L457.90 693.3 L458.20 691.7 L458.40 704.2 L458.50 701.5 L459.10 696.3 L459.70 697.5 L460.30 695.0 L460.90 695.3 L461.50 699.0 L462.10 692.2 L462.70 699.1 L462.80 691.7 L463.00 699.6 L463.30 694.3 L463.90 697.7 L464.50 698.1 L465.10 695.1 L465.70 693.5 L466.30 692.9 L466.90 696.8 L467.40 692.8 L467.60 699.6 L467.50 695.6 L468.10 695.6 L468.70 697.2 L469.30 693.6 L469.90 695.0 L470.50 693.6 L471.10 696.4 L471.70 696.1 L471.90 693.9 L472.10 701.9 L472.30 697.7 L472.90 698.1 L473.50 695.5 L474.10 703.6 L474.70 698.0 L475.30 695.6 L475.90 702.4 L476.50 695.1 L476.70 706.5 L476.50 698.7 L477.10 699.9 L477.70 703.1 L478.30 699.6 L478.90 700.7 L479.50 691.5 L480.10 695.7 L480.70 693.3 L481.00 689.4 L481.20 697.4 L481.30 697.4 L481.90 691.2 L482.50 694.7 L483.10 695.1 L483.70 694.4 L484.30 693.5 L484.90 697.3 L485.50 696.2 L485.60 691.7 L485.80 698.5 L486.10 698.5 L486.70 696.1 L487.30 694.2 L487.90 693.0 L488.50 694.3 L489.10 693.6 L489.70 697.8 L490.20 693.9 L490.40 699.6 L490.30 699.0 L490.90 701.4 L491.50 694.6 L492.10 697.1 L492.70 705.9 L493.30 697.3 L493.90 707.2 L494.50 696.7 L494.70 696.2 L494.90 711.0 L495.10 710.2 L495.70 709.5 L496.30 707.8 L496.90 703.2 L497.50 700.1 L498.10 700.8 L498.70 700.5 L499.30 696.2 L499.50 704.2 L499.30 703.5 L499.90 704.0 L500.50 702.9 L501.10 699.8 L501.70 698.3 L502.30 700.7 L502.90 698.0 L503.50 702.5 L503.90 697.4 L504.10 703.1 L504.10 697.9 L504.70 699.9 L505.30 702.1 L505.90 702.1 L506.50 695.5 L507.10 699.2 L507.70 695.2 L508.30 701.8 L508.40 693.9 L508.60 701.9 L508.90 696.9 L509.50 696.6 L510.10 696.9 L510.70 703.0 L511.30 700.8 L511.90 700.0 L512.50 698.5 L513.00 698.5 L513.20 704.2 L513.10 703.8 L513.70 701.5 L514.30 704.7 L514.90 700.8 L515.50 703.4 L516.10 699.8 L516.70 702.9 L517.30 705.3 L517.50 699.6 L517.70 706.5 L517.90 701.0 L518.50 702.8 L519.10 707.0 L519.70 706.1 L520.30 704.4 L520.90 707.0 L521.50 701.2 L522.10 699.6 L522.30 708.8 L522.10 700.1 L522.70 702.3 L523.30 701.3 L523.90 701.2 L524.50 700.3 L525.10 701.6 L525.70 701.0 L526.30 700.8 L526.70 700.8 L526.90 707.6 L526.90 701.6 L527.50 702.0 L528.10 707.1 L528.70 707.7 L529.30 704.6 L529.90 707.7 L530.50 703.7 L531.10 709.0 L531.20 703.1 L531.40 709.9 L531.70 704.9 L532.30 703.5 L532.90 708.8 L533.50 703.6 L534.10 706.1 L534.70 703.7 L535.30 703.1 L535.80 701.9 L536.00 707.6 L535.90 702.6 L536.50 702.0 L537.10 702.3 L537.70 707.9 L538.30 706.6 L538.90 704.3 L539.50 707.7 L540.10 703.3 L540.30 699.6 L540.50 708.8 L540.70 701.6 L541.30 700.1 L541.90 708.1 L542.50 702.8 L543.10 706.7 L543.70 702.2 L544.30 705.7 L544.90 699.6 L545.10 707.6 L544.90 702.1 L545.50 707.3 L546.10 705.6 L546.70 703.1 L547.30 702.3 L547.90 707.0 L548.50 704.0 L549.10 706.5 L549.50 701.9 L549.70 708.8 L549.70 704.0 L550.30 708.5 L550.90 708.9 L551.50 708.9 L552.10 703.9 L552.70 707.4 L553.30 705.4 L553.90 704.5 L554.00 704.2 L554.20 709.9 L554.50 705.9 L555.10 707.8 L555.70 710.4 L556.30 706.2 L556.90 714.2 L557.50 717.5 L558.10 718.8 L558.60 707.6 L558.80 720.2 L558.70 716.9 L559.30 715.4 L559.90 711.0 L560.50 724.9 L561.10 724.7 L561.70 719.8 L562.30 721.1 L562.90 722.4 L563.10 715.6 L563.30 731.6 L563.50 718.7 L564.10 721.8 L564.70 730.1 L565.30 730.6 L565.40 727.0 L565.60 743.0 L565.90 730.7 L566.50 739.0 L567.10 732.2 L567.70 717.9 L567.90 736.1 L567.70 720.2 L568.30 731.7 L568.90 725.2 L569.50 716.9 L570.00 711.0 L570.20 722.5 L570.10 720.3 L570.70 715.8 L571.30 715.9 L571.90 713.6 L572.30 704.2 L572.50 713.3 L572.50 709.3 L573.10 712.0 L573.70 711.8 L574.30 704.0 L574.90 710.0 L575.50 706.5 L576.10 705.9 L576.70 706.0 L576.80 699.6 L577.00 711.0 L577.30 703.4 L577.90 702.5 L578.50 706.5 L579.10 701.8 L579.70 702.2 L580.30 703.4 L580.90 699.8 L581.40 698.5 L581.60 708.8 L581.50 704.8 L582.10 698.7 L582.70 708.3 L583.30 706.4 L583.90 700.5 L584.50 702.4 L585.10 699.4 L585.70 706.7 L586.00 699.6 L586.20 709.9 L586.30 706.6 L586.90 709.1 L587.50 704.3 L588.10 702.5 L588.70 701.8 L589.30 707.6 L589.90 704.4 L590.50 699.6 L590.70 713.3 L590.50 713.3 L591.10 700.2 L591.70 702.5 L592.30 700.4 L592.90 705.1 L593.50 705.5 L594.10 699.1 L594.70 699.9 L595.10 698.5 L595.30 707.6 L595.30 700.5 L595.90 703.8 L596.50 700.1 L597.10 708.0 L597.70 699.6 L598.30 701.7 L598.90 707.7 L599.50 706.8 L599.60 695.1 L599.80 708.8 L600.10 696.1 L600.70 709.5 L601.30 698.8 L601.90 705.3 L602.50 699.9 L603.10 697.8 L603.70 708.6 L604.20 696.2 L604.40 713.3 L604.30 709.6 L604.90 698.3 L605.50 698.9 L606.10 701.9 L606.70 707.8 L607.30 702.0 L607.90 698.3 L608.50 701.9 L608.80 695.1 L609.00 708.8 L609.10 707.9 L609.70 699.2 L610.30 706.6 L610.90 698.4 L611.50 709.3 L612.10 699.3 L612.70 701.0 L613.30 695.1 L613.50 711.0 L613.30 696.3 L613.90 709.0 L614.50 700.9 L615.10 697.9 L615.70 697.7 L616.30 698.0 L616.90 703.2 L617.50 699.1 L617.90 696.2 L618.10 704.2 L618.10 696.5 L618.70 698.4 L619.30 695.4 L619.90 696.5 L620.50 694.2 L621.10 698.2 L621.70 695.7 L622.30 695.9 L622.40 691.7 L622.60 699.6 L622.90 699.4 L623.50 696.9 L624.10 696.3 L624.70 698.7 L625.30 695.3 L625.90 696.2 L626.50 697.6 L627.00 692.8 L627.20 701.9 L627.10 696.1 L627.70 694.8 L628.30 700.4 L628.90 696.7 L629.50 703.4 L630.00 696.2 L630.20 704.2 L630.10 699.1 L630.70 695.9 L631.30 695.3 L631.60 695.1 L631.80 704.2 L631.90 701.4 L632.50 697.3 L633.10 699.2 L633.70 697.8 L634.30 702.5 L634.60 695.1 L634.80 704.2 L634.90 704.1 L635.50 704.1 L636.10 695.1 L636.30 704.2 L636.10 700.9 L636.70 702.5 L637.30 703.7 L637.90 705.7 L638.50 705.0 L639.10 701.9 L639.30 713.3 L639.10 711.5 L639.70 715.5 L640.30 705.5 L640.90 720.1 L641.40 708.8 L641.60 723.6 L641.50 709.6 L642.10 711.7 L642.70 717.0 L643.30 705.3 L643.70 701.9 L643.90 713.3 L643.90 712.2 L644.50 704.1 L645.10 711.8 L645.70 704.9 L646.30 703.4 L646.90 702.9 L647.50 707.8 L648.10 705.9 L648.20 699.6 L648.40 708.8 L648.70 700.3 L649.30 708.0 L649.90 709.5 L650.50 704.7 L651.10 708.0 L651.70 698.6 L652.30 710.8 L652.80 697.4 L653.00 711.0 L652.90 706.3 L653.50 707.7 L654.10 702.5 L654.70 704.8 L655.30 707.7 L655.90 697.6 L656.50 707.2 L657.10 710.0 L657.40 697.4 L657.60 711.0 L657.70 702.5 L658.30 708.5 L658.90 697.1 L659.50 695.7 L660.10 704.5 L660.70 703.3 L661.30 693.8 L661.90 692.8 L662.10 704.2 L661.90 701.5 L662.50 692.7 L663.10 692.2 L663.70 692.9 L664.30 698.8 L664.90 694.2 L665.50 699.3 L666.10 699.8 L666.50 690.5 L666.70 699.6 L666.70 695.8 L667.30 698.6 L667.90 699.5 L668.50 691.1 L669.10 694.9 L669.70 695.8 L670.30 693.9 L670.90 693.3 L671.00 691.7 L671.20 699.6 L671.50 700.2 L672.10 693.7 L672.70 701.6 L673.30 698.1 L673.90 704.9 L674.50 701.7 L675.10 702.1 L675.60 697.4 L675.80 708.8 L675.70 706.3 L676.30 703.6 L676.90 704.5 L677.50 703.1 L678.10 704.3 L678.70 700.7 L679.30 699.7 L679.90 704.1 L680.20 698.5 L680.40 706.5 L680.50 702.0 L681.10 705.1 L681.70 705.3 L682.30 704.0 L682.90 701.3 L683.50 703.2 L684.10 704.2 L684.70 698.5 L684.90 704.2 L684.70 700.4 L685.30 702.3 L685.90 701.8 L686.50 706.8 L687.10 704.2 L687.70 702.5 L688.30 708.7 L688.90 704.9 L689.30 700.8 L689.50 711.0 L689.50 710.4 L690.10 703.0 L690.70 705.2 L691.30 706.5 L691.90 708.7 L692.50 701.7 L693.10 708.7 L693.70 704.0 L693.90 701.9 L694.10 708.8 L694.30 706.0 L694.90 708.5 L695.50 709.6 L696.10 709.7 L696.70 710.7 L697.30 707.5 L697.90 710.0 L698.40 703.1 L698.60 712.2 L698.50 704.8 L699.10 704.4 L699.70 708.2 L700.30 712.6 L700.90 709.3 L701.50 712.0 L702.10 705.7 L702.70 705.9 L703.00 705.3 L703.20 716.8 L703.30 706.6 L703.90 705.8 L704.50 709.9 L705.10 711.1 L705.70 713.0 L706.30 707.5 L706.90 714.4 L707.50 706.5 L707.70 714.5 L707.50 706.9 L708.10 714.9 L708.70 707.1 L709.30 707.9 L709.90 714.2 L710.50 709.6 L711.10 709.2 L711.70 710.1 L712.10 707.6 L712.30 719.0 L712.30 708.3 L712.90 709.4 L713.50 715.7 L714.10 717.1 L714.70 716.5 L715.30 717.0 L715.90 708.7 L716.50 708.1 L716.70 707.6 L716.90 719.0 L717.10 714.0 L717.70 711.6 L718.30 719.0 L718.90 710.4 L719.50 709.6 L720.10 709.4 L720.70 715.4 L721.20 708.8 L721.40 721.3 L721.30 716.4 L721.90 720.9 L722.50 719.9 L723.10 714.8 L723.70 712.0 L724.30 714.9 L724.90 716.6 L725.50 723.4 L725.80 714.5 L726.00 723.6 L726.10 721.9 L726.70 722.1 L727.30 717.0 L727.90 721.1 L728.50 719.5 L729.10 718.8 L729.70 717.6 L730.30 715.6 L730.50 722.5 L730.30 721.5 L730.90 721.3 L731.50 722.3 L732.10 720.2 L732.70 716.8 L733.30 721.3 L733.90 721.6 L734.50 721.5 L734.90 715.6 L735.10 722.5 L735.10 722.2 L735.70 716.3 L736.30 721.3 L736.90 719.4 L737.50 723.8 L738.10 724.1 L738.70 724.1 L739.30 723.2 L739.50 717.9 L739.70 727.0 L739.90 726.9 L740.50 727.2 L741.10 721.4 L741.70 720.7 L742.30 722.7 L742.90 720.5 L743.50 728.9 L744.00 721.3 L744.20 729.3 L744.10 721.6 L744.70 723.5 L745.30 722.3 L745.90 726.4 L746.50 722.0 L747.10 730.6 L747.70 728.5 L748.30 723.3 L748.60 720.2 L748.80 738.4 L748.90 721.6 L749.50 736.0 L750.10 732.2 L750.70 730.3 L751.30 720.6 L751.90 720.6 L752.50 726.8 L753.10 719.0 L753.30 729.3 L753.10 720.9 L753.70 728.3 L754.30 723.5 L754.90 726.3 L755.50 724.5 L756.10 721.7 L756.70 720.8 L757.30 725.4 L757.70 719.0 L757.90 729.3 L757.90 729.4 L758.50 722.6 L759.10 730.1 L759.70 722.5 L760.30 728.1 L760.90 729.2 L761.50 732.0 L762.10 724.6 L762.30 724.7 L762.50 732.7 L762.70 726.3 L763.30 729.4 L763.90 726.4 L764.50 732.7 L765.10 726.2 L765.70 733.1 L766.30 733.2 L766.80 727.0 L767.00 736.1 L766.90 732.2 L767.50 729.4 L768.10 736.7 L768.70 729.6 L769.30 736.2 L769.90 735.5 L770.50 726.8 L771.10 735.3 L771.40 724.7 L771.60 738.4 L771.70 726.8 L772.30 733.1 L772.90 725.0 L773.50 733.7 L774.10 725.9 L774.70 729.5 L775.30 732.4 L775.90 725.9 L776.00 724.7 L776.20 731.6 L776.50 729.3 L777.10 730.1 L777.70 733.0 L778.30 731.3 L778.90 730.3 L779.50 739.2 L780.10 744.1 L780.50 731.6 L780.70 749.8 L780.70 741.3 L781.30 740.0 L781.90 743.9 L782.50 735.4 L783.10 734.8 L783.70 741.8 L784.30 741.3 L784.90 736.8 L785.10 733.9 L785.30 747.5 L785.50 737.2 L786.10 741.1 L786.70 734.9 L787.30 746.4 L787.90 742.2 L788.50 745.6 L789.10 742.8 L789.60 731.6 L789.80 745.3 L789.70 737.2 L790.30 742.5 L790.90 730.9 L791.50 732.5 L792.10 741.0 L792.70 732.5 L793.30 739.7 L793.90 733.5 L794.20 729.3 L794.40 740.7 L794.50 737.2 L795.10 731.2 L795.70 732.3 L796.30 748.8 L796.90 749.2 L797.50 739.2 L798.10 748.4 L798.70 751.4 L798.80 731.6 L799.00 760.1 L799.30 745.0 L799.90 754.1 L800.50 732.1 L801.10 732.4 L801.70 749.4 L802.30 751.3 L802.90 748.7 L803.30 731.6 L803.50 749.8 L803.50 749.1 L804.10 741.9 L804.70 734.0 L805.30 730.7 L805.90 751.1 L806.50 738.9 L807.10 749.4 L807.70 733.6 L807.90 729.3 L808.10 752.1 L808.30 743.5 L808.90 754.8 L809.50 732.1 L810.10 744.8 L810.70 741.7 L811.30 757.5 L811.90 750.9 L812.40 736.1 L812.60 765.8 L812.50 753.8 L813.10 759.3 L813.70 749.7 L814.30 756.2 L814.90 742.6 L815.50 744.7 L816.10 742.2 L816.70 744.8 L817.00 733.9 L817.20 745.3 L817.30 735.4 L817.90 733.9 L818.50 741.6 L819.10 744.0 L819.70 743.9 L820.00 733.9 L820.20 763.5 L820.30 748.6 L820.90 750.6 L821.50 741.6 L821.60 733.9 L821.80 743.0 L822.10 743.9 L822.70 743.9 L823.30 749.7 L823.90 745.1 L824.50 756.1 L824.60 738.4 L824.80 761.2 L825.10 742.6 L825.70 761.2 L826.10 736.1 L826.30 761.2 L826.30 752.0 L826.90 763.3 L827.50 739.4 L828.10 765.3 L828.70 749.7 L829.10 738.4 L829.30 770.3 L829.30 746.1 L829.90 748.2 L830.50 759.9 L831.10 761.7 L831.70 753.7 L832.30 748.5 L832.90 758.7 L833.50 753.9 L833.70 738.4 L833.90 756.7 L834.10 739.2 L834.70 753.6 L835.30 750.8 L835.90 748.4 L836.50 745.6 L837.10 743.9 L837.70 743.6 L838.20 736.1 L838.40 745.3 L838.30 737.3 L838.90 744.0 L839.50 744.6 L840.10 740.1 L840.70 737.4 L841.30 740.3 L841.90 740.9 L842.50 742.0 L842.80 736.1 L843.00 743.0 L843.10 738.2 L843.70 739.8 L844.30 740.9 L844.90 753.8 L845.10 743.0 L845.30 772.6 L845.50 758.4 L846.10 760.0 L846.70 753.1 L847.30 753.3 L847.40 743.0 L847.60 761.2 L847.90 755.4 L848.50 746.5 L849.10 742.6 L849.70 744.1 L850.30 746.4 L850.90 749.9 L851.50 752.4 L851.90 740.7 L852.10 756.7 L852.10 741.2 L852.70 756.6 L853.30 747.6 L853.90 751.2 L854.50 746.6 L855.10 755.1 L855.70 758.5 L856.30 749.5 L856.50 745.3 L856.70 761.2 L856.90 747.3 L857.50 745.8 L858.10 751.6 L858.70 749.5 L859.30 745.8 L859.90 753.4 L860.50 756.5 L861.00 738.4 L861.20 756.7 L861.10 749.8 L861.70 742.8 L862.30 749.4 L862.90 756.0 L863.50 749.4 L864.10 752.8 L864.70 757.1 L865.30 758.0 L865.60 745.3 L865.80 758.9 L865.90 751.4 L866.50 747.9 L867.10 751.2 L867.70 763.7 L867.90 745.3 L868.10 765.8 L868.30 749.8 L868.90 749.9 L869.50 743.4 L870.10 744.1 L870.20 740.7 L870.40 756.7 L870.70 741.2 L871.30 757.0 L871.90 752.3 L872.50 742.2 L873.10 757.5 L873.70 745.1 L874.30 745.2 L874.70 743.0 L874.90 758.9 L874.90 756.6 L875.50 746.0 L876.10 758.2 L876.70 746.8 L877.30 755.0 L877.90 748.2 L878.50 755.0 L879.10 748.1 L879.30 743.0 L879.50 756.7 L879.70 745.9 L880.30 754.9 L880.90 758.2 L881.50 745.7 L882.10 753.9 L882.70 750.6 L883.30 759.3 L883.90 747.5 L884.10 763.5 L883.90 759.4 L884.50 752.9 L885.10 752.9 L885.70 754.7 L886.30 752.9 L886.90 751.9 L887.50 748.7 L888.10 746.9 L888.40 745.3 L888.60 754.4 L888.70 750.3 L889.30 744.1 L889.90 751.8 L890.50 743.9 L891.10 742.4 L891.70 748.5 L892.30 745.4 L892.90 736.4 L893.00 736.1 L893.20 747.5 L893.50 737.2 L894.10 745.4 L894.70 737.5 L895.30 742.7 L895.90 742.3 L896.50 744.5 L897.10 740.5 L897.50 736.1 L897.70 745.3 L897.70 741.3 L898.30 744.2 L898.90 740.1 L899.50 739.9 L900.10 741.1 L900.70 743.0 L901.30 739.0 L901.90 735.4 L902.10 735.0 L902.30 743.0 L902.50 745.4 L903.10 736.5 L903.70 742.0 L904.30 753.2 L904.40 738.4 L904.60 761.2 L904.90 744.6 L905.50 774.1 L906.10 784.1 L906.70 761.2 L906.90 800.0 L906.70 771.3 L907.30 788.9 L907.90 771.1 L908.50 776.4 L908.90 756.7 L909.10 772.6 L909.10 764.8 L909.70 761.8 L910.30 757.5 L910.90 758.0 L911.20 749.8 L911.40 761.2 L911.50 758.9 L912.10 751.3 L912.70 752.7 L913.30 751.9 L913.90 753.7 L914.50 753.8 L915.10 746.0 L915.70 746.0 L915.80 745.3 L916.00 756.7 L916.30 755.6 L916.90 754.2 L917.50 753.3 L918.10 746.0 L918.70 752.1 L919.30 746.7 L919.90 750.7 L920.30 745.3 L920.50 752.1 L920.50 746.0 L921.10 748.5 L921.70 745.4 L922.30 747.1 L922.90 746.2 L923.50 748.4 L924.10 741.7 L924.70 742.6 L924.90 738.4 L925.10 747.5 L925.30 739.2 L925.90 745.7 L926.50 740.4 L927.10 742.1 L927.70 737.9 L928.30 744.7 L928.90 741.2 L929.50 733.9 L929.70 745.3 L929.50 735.9 L930.10 746.5 L930.70 747.8 L931.30 734.1 L931.70 733.9 L931.90 761.2 L931.90 736.3 L932.50 737.4 L933.10 741.9 L933.70 742.6 L934.00 736.1 L934.20 745.3 L934.30 743.9 L934.90 740.5 L935.50 743.6 L936.10 735.2 L936.70 739.3 L937.30 739.9 L937.90 734.4 L938.50 736.9 L938.60 733.9 L938.80 743.0 L939.10 739.7 L939.70 734.7 L940.30 738.9 L940.90 744.3 L941.50 738.5 L942.10 747.0 L942.70 736.5 L943.10 736.1 L943.30 749.8 L943.30 745.4 L943.90 741.6 L944.50 744.3 L945.10 737.5 L945.70 748.6 L946.30 746.0 L946.90 745.6 L947.50 749.5 L947.70 738.4 L947.90 749.8 L948.10 741.6 L948.70 737.9 L949.30 741.3 L949.90 739.6 L950.50 740.6 L951.10 743.6 L951.70 745.3 L952.30 736.1 L952.50 747.5 L952.30 739.1 L952.90 747.8 L953.50 742.7 L954.10 749.3 L954.70 740.2 L955.30 741.4 L955.90 738.8 L956.50 750.5 L956.80 738.4 L957.00 752.1 L957.10 748.8 L957.70 754.5 L958.30 744.5 L958.90 752.6 L959.10 738.4 L959.30 765.8 L959.50 744.8 L960.10 753.5 L960.70 741.7 L961.30 743.7 L961.40 740.7 L961.60 749.8 L961.90 742.1 L962.50 741.2 L963.10 744.6 L963.70 738.4 L964.30 742.5 L964.90 735.5 L965.50 741.9 L966.00 733.9 L966.20 743.0 L966.10 735.9 L966.70 743.8 L967.30 742.4 L967.90 737.4 L968.50 738.4 L969.10 747.0 L969.70 747.9 L970.30 749.0 L970.50 740.7 L970.70 754.4 L970.90 752.7 L971.50 753.6 L972.10 747.6 L972.70 753.5 L973.30 743.5 L973.90 749.3 L974.50 745.8 L975.10 745.3 L975.30 756.7 L975.10 750.3 L975.70 758.4 L976.30 752.2 L976.90 762.3 L977.40 745.3 L977.60 765.8 L977.50 756.0 L978.10 751.0 L978.70 747.2 L979.30 761.4 L979.60 747.5 L979.80 761.2 L979.90 756.5 L980.50 750.1 L981.10 759.2 L981.70 750.7 L982.30 760.3 L982.90 758.3 L983.50 761.8 L984.10 763.7 L984.20 745.3 L984.40 768.1 L984.70 746.4 L985.30 747.6 L985.90 750.0 L986.50 741.8 L987.10 759.8 L987.70 745.8 L988.30 744.7 L988.80 738.4 L989.00 765.8 L988.90 747.5 L989.50 744.1 L990.10 769.0 L990.70 742.4 L991.30 754.7 L991.90 744.6 L992.50 772.6 L993.10 747.7 L993.30 738.4 L993.50 777.2 L993.70 772.4 L994.30 760.7 L994.90 774.7 L995.50 741.5 L996.10 750.9 L996.70 768.2 L997.30 764.3 L997.90 736.1 L998.10 770.3 L997.90 764.2 L998.50 736.8 L999.10 764.4 L999.70 759.4 L1000.20 738.4 L1000.40 781.7 L1000.30 764.0 L1000.90 753.8 L1001.50 736.3 L1002.10 747.5 L1002.40 733.9 L1002.60 756.7 L1002.70 733.8 L1003.30 743.6 L1003.90 751.5 L1004.50 744.2 L1005.10 739.7 L1005.70 740.6 L1006.30 744.1 L1006.90 739.9 L1007.00 731.6 L1007.20 761.2 L1007.50 748.1 L1008.10 735.2 L1008.70 746.8 L1009.30 743.7 L1009.90 738.4 L1010.00 733.9 L1010.20 745.3 L1010.50 743.4 L1011.10 735.2 L1011.60 731.6 L1011.80 747.5 L1011.70 733.5 L1012.30 733.9 L1012.90 748.5 L1013.50 740.0 L1014.10 737.4 L1014.60 736.1 L1014.80 749.8 L1014.70 737.2 L1015.30 738.9 L1015.90 736.6 L1016.10 736.1 L1016.30 745.3 L1016.50 737.3 L1017.10 748.9 L1017.70 752.6 L1018.30 746.0 L1018.90 750.5 L1019.10 736.1 L1019.30 765.8 L1019.50 739.5 L1020.10 741.5 L1020.70 742.1 L1021.30 758.6 L1021.90 755.4 L1022.50 752.1 L1023.10 744.7 L1023.70 745.3 L1023.90 756.7 L1023.70 754.7 L1024.30 762.4 L1024.90 756.3 L1025.50 756.6 L1026.00 756.7 L1026.20 802.3 L1026.10 771.3 L1026.70 792.9 L1027.30 792.9 L1027.90 810.7 L1028.20 802.3 L1028.40 816.0 L1028.50 798.4 L1029.10 804.5 L1029.70 797.9 L1030.30 798.5 L1030.50 772.6 L1030.70 806.8 L1030.90 782.0 L1031.50 769.2 L1032.10 759.2 L1032.70 771.2 L1032.80 747.5 L1033.00 770.3 L1033.30 766.4 L1033.90 755.0 L1034.50 761.3 L1035.10 748.1 L1035.70 748.4 L1036.30 749.4 L1036.90 759.1 L1037.40 745.3 L1037.60 758.9 L1037.50 758.7 L1038.10 761.2 L1038.70 764.1 L1039.30 752.9 L1039.90 760.3 L1040.50 770.9 L1041.10 752.9 L1041.70 761.9 L1041.90 749.8 L1042.10 777.2 L1042.30 777.7 L1042.90 777.1 L1043.50 759.2 L1044.10 780.5 L1044.20 752.1 L1044.40 786.3 L1044.70 764.1 L1045.30 775.6 L1045.90 760.6 L1046.50 745.3 L1046.70 765.8 L1046.50 764.1 L1047.10 760.2 L1047.70 764.5 L1048.30 764.7 L1048.90 763.3 L1049.50 753.6 L1050.10 761.9 L1050.70 749.5 L1051.00 745.3 L1051.20 765.8 L1051.30 763.0 L1051.90 762.2 L1052.50 768.4 L1053.10 760.2 L1053.70 771.1 L1054.30 765.0 L1054.90 761.7 L1055.50 751.1 L1055.60 743.0 L1055.80 774.9 L1056.10 756.2 L1056.70 776.9 L1057.30 778.3 L1057.90 761.2 L1058.10 793.1 L1057.90 763.9 L1058.50 789.7 L1059.10 785.2 L1059.70 775.8 L1060.20 749.8 L1060.40 781.7 L1060.30 774.1 L1060.90 782.7 L1061.50 779.6 L1062.10 777.9 L1062.70 765.7 L1063.30 766.2 L1063.90 757.3 L1064.50 789.7 L1064.70 756.7 L1064.90 790.9 L1065.10 787.1 L1065.70 768.5 L1066.30 760.5 L1066.90 758.9 L1067.50 763.8 L1068.10 763.8 L1068.70 765.0 L1069.30 752.1 L1069.50 770.3 L1069.30 767.0 L1069.90 758.8 L1070.50 756.6 L1071.10 757.7 L1071.70 758.6 L1072.30 763.4 L1072.90 759.6 L1073.50 764.7 L1073.90 761.2 L1074.10 770.3 L1074.10 762.1 L1074.70 762.9 L1075.30 799.7 L1075.90 806.9 L1076.10 765.8 L1076.30 820.5 L1076.50 782.0 L1077.10 764.0 L1077.70 780.4 L1078.30 761.8 L1078.40 761.2 L1078.60 770.3 L1078.90 767.0 L1079.50 763.3 L1080.10 763.6 L1080.70 762.8 L1081.30 770.9 L1081.90 764.5 L1082.50 766.8 L1083.00 763.5 L1083.20 772.6 L1083.10 772.6 L1083.70 772.0 L1084.30 770.7 L1084.90 781.4 L1085.50 778.4 L1086.10 771.8 L1086.70 784.2 L1087.30 793.7 L1087.50 761.2 L1087.70 800.0 L1087.90 783.6 L1088.50 787.2 L1089.10 761.3 L1089.70 761.9 L1090.30 774.3 L1090.90 774.0 L1091.50 762.0 L1092.10 760.1 L1092.30 768.1 L1092.10 767.3 L1092.70 770.1 L1093.30 765.7 L1093.90 763.3 L1094.50 770.5 L1095.10 769.5 L1095.70 780.4 L1096.30 771.5 L1096.70 768.1 L1096.90 786.3 L1096.90 781.9 L1097.50 770.4 L1098.10 771.4 L1098.70 779.2 L1099.30 782.5 L1099.90 779.9 L1100.50 782.1 L1101.10 779.0 L1101.20 772.6 L1101.40 781.7 L1101.70 792.2 L1102.30 784.9 L1102.90 815.3 L1103.50 777.2 L1103.70 829.6 L1103.50 801.1 L1104.10 784.3 L1104.70 809.3 L1105.30 781.5 L1105.80 779.5 L1106.00 790.9 L1105.90 782.7 L1106.50 782.0 L1107.10 792.5 L1107.70 785.5 L1108.30 802.9 L1108.90 793.6 L1109.50 783.6 L1110.10 806.7 L1110.30 784.0 L1110.50 813.7 L1110.70 798.3 L1111.30 799.4 L1111.90 802.7 L1112.50 785.6 L1113.10 802.4 L1113.70 783.0 L1114.30 797.7 L1114.90 779.5 L1115.10 795.4 L1114.90 781.5 L1115.50 794.6 L1116.10 781.4 L1116.70 790.4 L1117.30 801.6 L1117.90 802.9 L1118.50 807.2 L1119.10 779.6 L1119.50 779.5 L1119.70 816.0 L1119.70 810.0 L1120.30 812.7 L1120.90 797.7 L1121.50 789.5 L1122.10 800.6 L1122.70 798.6 L1123.30 797.1 L1123.90 787.2 L1124.00 786.3 L1124.20 797.7 L1124.50 798.6 L1125.10 794.3 L1125.70 793.0 L1126.30 803.4 L1126.90 819.9 L1127.50 837.1 L1128.10 805.0 L1128.60 800.0 L1128.80 857.0 L1128.70 816.7 L1129.30 805.1 L1129.90 805.7 L1130.50 852.4 L1131.10 812.5 L1131.70 842.9 L1132.30 812.1 L1132.90 855.8 L1133.10 802.3 L1133.30 859.3 L1133.50 807.6 L1134.10 810.4 L1134.70 846.4 L1135.30 804.6 L1135.90 838.9 L1136.50 855.1 L1137.10 838.4 L1137.70 804.5 L1137.90 854.7 L1137.70 834.0 L1138.30 832.1 L1138.90 836.4 L1139.50 839.7 L1140.10 813.5 L1140.70 828.5 L1141.30 804.4 L1141.90 798.8 L1142.30 795.4 L1142.50 818.2 L1142.50 812.3 L1143.10 805.4 L1143.70 800.5 L1144.30 812.5 L1144.90 800.7 L1145.50 801.0 L1146.10 803.1 L1146.70 806.6 L1146.80 798.8 L1147.00 806.8 L1147.30 799.9 L1147.90 805.0 L1148.50 804.5 L1149.10 813.1 L1149.70 821.2 L1150.30 809.8 L1150.90 811.0 L1151.40 806.8 L1151.60 838.8 L1151.50 830.4 L1152.10 830.7 L1152.70 820.0 L1153.30 811.9 L1153.90 832.0 L1154.50 830.1 L1155.10 816.0 L1155.70 822.9 L1156.00 818.2 L1156.20 827.4 L1156.30 818.6 L1156.90 826.9 L1157.50 819.7 L1158.10 822.6 L1158.70 825.1 L1159.30 820.8 L1159.90 822.6 L1160.50 820.5 L1160.70 825.1 L1160.50 823.5 L1161.10 822.3 L1161.70 822.0 L1162.30 821.4 L1162.90 823.7 L1163.50 818.4 L1164.10 822.0 L1164.70 817.5 L1165.10 816.0 L1165.30 822.8 L1165.30 822.4 L1165.90 823.2 L1166.50 819.0 L1167.10 825.3 L1167.70 823.3 L1168.30 831.9 L1168.90 824.6 L1169.50 840.0 L1169.60 825.1 L1169.80 843.3 L1170.10 846.9 L1170.70 841.5 L1171.30 851.2 L1171.90 860.9 L1172.50 855.0 L1173.10 877.9 L1173.70 874.6 L1174.20 843.3 L1174.40 888.9 L1174.30 861.6 L1174.90 869.2 L1175.50 873.9 L1176.10 857.2 L1176.70 852.3 L1177.30 842.7 L1177.90 840.7 L1178.50 844.2 L1178.80 838.8 L1179.00 852.4 L1179.10 840.6 L1179.70 845.8 L1180.30 844.2 L1180.90 840.3 L1181.50 845.9 L1182.10 838.5 L1182.70 840.9 L1183.30 836.5 L1183.50 843.3 L1183.30 843.3 L1183.90 836.8 L1184.50 837.5 L1185.10 838.0 L1185.70 845.7 L1186.30 838.3 L1186.90 846.5 L1187.50 842.6 L1187.90 838.8 L1188.10 847.9 L1188.10 847.9 L1188.70 841.5 L1189.30 849.5 L1189.90 842.8 L1190.50 846.1 L1191.10 849.5 L1191.70 855.3 L1192.30 850.2 L1192.40 847.9 L1192.60 857.0 L1192.90 854.8 L1193.50 851.0 L1194.10 851.9 L1194.70 852.0 L1195.30 855.8 L1195.90 857.7 L1196.50 858.3 L1197.00 852.4 L1197.20 868.4 L1197.10 865.0 L1197.70 871.3 L1198.30 867.4 L1198.90 866.6 L1199.50 865.6 L1200.10 872.6 L1200.70 883.9 L1201.30 871.2 L1201.60 870.7 L1201.80 888.9 L1201.90 886.0 L1202.50 887.3 L1203.10 880.5 L1203.70 881.6 L1204.30 878.9 L1204.90 881.2 L1205.50 879.6" stroke="#000" stroke-width="1.2" fill="none" stroke-linejoin="miter"/><path d="M68.5 664 V888" stroke="#000" stroke-width="1.2"/><path d="M107 914.5 H1173" stroke="#000" stroke-width="1.3"/><path d="M181.9 911 V915" stroke="#000" stroke-width="1"/><path d="M296.2 911 V915" stroke="#000" stroke-width="1"/><path d="M410.5 911 V915" stroke="#000" stroke-width="1"/><path d="M524.8 911 V915" stroke="#000" stroke-width="1"/><path d="M639.1 911 V915" stroke="#000" stroke-width="1"/><path d="M753.4 911 V915" stroke="#000" stroke-width="1"/><path d="M867.7 911 V915" stroke="#000" stroke-width="1"/><path d="M982.0 911 V915" stroke="#000" stroke-width="1"/><path d="M1096.3 911 V915" stroke="#000" stroke-width="1"/></svg>
<div class="a t" style="left:43.5px;top:674.5px;font-size:15px;color:#111;letter-spacing:0.2px;">36.46</div>
<div class="a t" style="left:151.9px;top:917px;width:60px;text-align:center;font-size:14px;color:#111;letter-spacing:0.5px;">1.998</div>
<div class="a t" style="left:266.2px;top:917px;width:60px;text-align:center;font-size:14px;color:#111;letter-spacing:0.5px;">2.049</div>
<div class="a t" style="left:380.5px;top:917px;width:60px;text-align:center;font-size:14px;color:#111;letter-spacing:0.5px;">2.099</div>
<div class="a t" style="left:494.79999999999995px;top:917px;width:60px;text-align:center;font-size:14px;color:#111;letter-spacing:0.5px;">2.150</div>
<div class="a t" style="left:609.1px;top:917px;width:60px;text-align:center;font-size:14px;color:#111;letter-spacing:0.5px;">2.200</div>
<div class="a t" style="left:723.4px;top:917px;width:60px;text-align:center;font-size:14px;color:#111;letter-spacing:0.5px;">2.251</div>
<div class="a t" style="left:837.6999999999999px;top:917px;width:60px;text-align:center;font-size:14px;color:#111;letter-spacing:0.5px;">2.301</div>
<div class="a t" style="left:952.0px;top:917px;width:60px;text-align:center;font-size:14px;color:#111;letter-spacing:0.5px;">2.351</div>
<div class="a t" style="left:1066.3px;top:917px;width:60px;text-align:center;font-size:14px;color:#111;letter-spacing:0.5px;">2.402</div>
<div class="a" style="left:44px;top:888px;width:63px;height:25px;background:#fbfbfb;box-shadow:inset 0 1px 0 #e4e4e4;"></div>
<div class="a t" style="left:47.5px;top:892.2px;font-size:14.5px;color:#9a9a9a;letter-spacing:0.5px;">1.94794</div>
<div class="a" style="left:44px;top:913px;width:37px;height:23px;background:#f6f6f6;box-shadow:inset 0 1px 0 #dcdcdc;"></div>
<div class="a t" style="left:48.5px;top:917.5px;font-size:14.5px;color:#9a9a9a;letter-spacing:0.8px;">252</div>
<div class="a" style="left:85px;top:913px;width:15px;height:23px;background:#f4f4f4;border-radius:7px;box-shadow:inset 0 0 0 1px #d0d0d0;"></div>
<svg style="left:85px;top:913px" width="15" height="23"><path d="M4.5 9 L7.5 5.5 L10.5 9 Z M4.5 14 L7.5 17.5 L10.5 14 Z" fill="#888"/></svg>
<div class="a" style="left:1173px;top:888px;width:63px;height:25px;background:#fbfbfb;box-shadow:inset 0 1px 0 #e4e4e4;"></div>
<div class="a t" style="left:1175px;top:892.2px;font-size:14.5px;color:#9a9a9a;letter-spacing:0.5px;">2.45206</div>
<div class="a" style="left:1173px;top:913px;width:36px;height:23px;background:#f6f6f6;box-shadow:inset 0 1px 0 #dcdcdc;"></div>
<div class="a t" style="left:1176.5px;top:917.5px;font-size:14.5px;color:#9a9a9a;letter-spacing:0.8px;">310</div>
<div class="a" style="left:1212px;top:913px;width:14px;height:23px;background:#f4f4f4;border-radius:7px;box-shadow:inset 0 0 0 1px #d0d0d0;"></div>
<svg style="left:1212px;top:913px" width="14" height="23"><path d="M4 9 L7 5.5 L10 9 Z M4 14 L7 17.5 L10 14 Z" fill="#888"/></svg>
<svg style="left:1224px;top:920px" width="16" height="17"><path d="M3 16 L15 4 M7 16 L15 8 M11 16 L15 12" stroke="#aaa" stroke-width="1"/></svg>
<div class="a" style="left:1278px;top:0px;width:2px;height:965px;background:linear-gradient(90deg,#3a3a3a,#9c9c9c 60%);"></div>
<div class="a" style="left:0px;top:963px;width:1280px;height:2px;background:linear-gradient(#3a3a3a,#fefefe 60%);"></div>
</body></html>
